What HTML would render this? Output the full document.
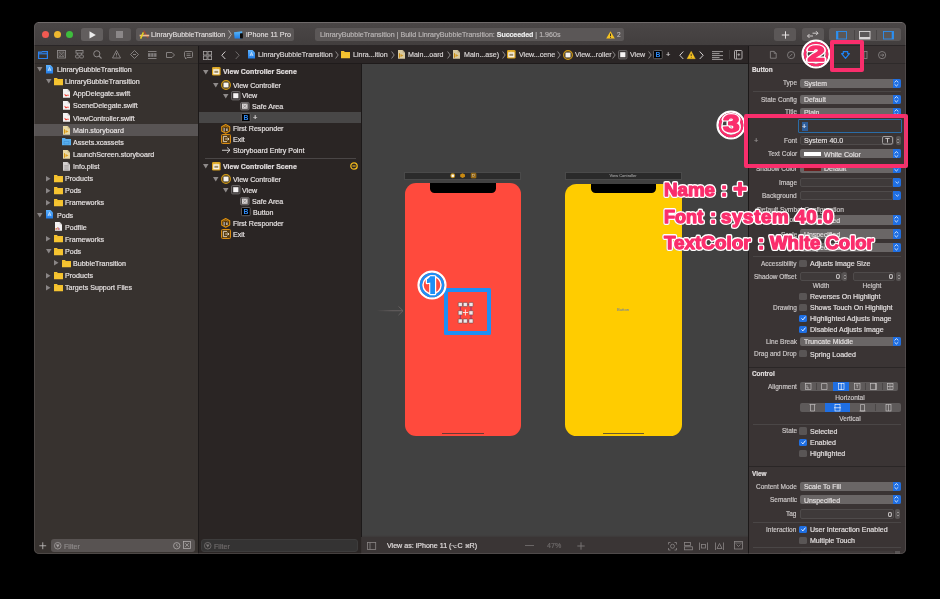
<!DOCTYPE html>
<html><head><meta charset="utf-8"><style>
html,body{margin:0;padding:0;background:#000;width:940px;height:599px;overflow:hidden;}
body>div,body>svg,#win div,#win svg{position:absolute;}
.t{white-space:nowrap;font-family:"Liberation Sans",sans-serif;-webkit-text-stroke:0.18px currentColor;will-change:transform;}
svg{overflow:visible;}
</style></head><body>
<div style="left:34px;top:22px;width:872px;height:532px;background:#373231;border-radius:5px;"></div>
<div style="left:34px;top:22px;width:872px;height:23px;background:linear-gradient(#4b4747,#423e3e);border-radius:5px 5px 0 0;"></div>
<div style="left:34px;top:45px;width:164px;height:509px;background:#37322f;border-radius:0 0 0 5px;"></div>
<div style="left:198px;top:45px;width:1px;height:509px;background:#1c1919;"></div>
<div style="left:199px;top:45px;width:549px;height:18px;background:#2b2626;"></div>
<div style="left:199px;top:63px;width:549px;height:1px;background:#1f1b1b;"></div>
<div style="left:199px;top:64px;width:162px;height:490px;background:#2a2524;"></div>
<div style="left:361px;top:64px;width:1px;height:473px;background:#1c1919;"></div>
<div style="left:362px;top:64px;width:386px;height:473px;background:#414141;"></div>
<div style="left:362px;top:537px;width:386px;height:17px;background:#3a3535;"></div>
<div style="left:748px;top:45px;width:1px;height:509px;background:#1c1919;"></div>
<div style="left:749px;top:45px;width:157px;height:509px;background:#3a3434;border-radius:0 0 5px 0;"></div>
<div style="left:34px;top:22px;width:872px;height:532px;background:transparent;box-sizing:border-box;border:0.6px solid rgba(120,115,115,0.35);border-radius:5px;z-index:1;"></div>
<div style="left:38px;top:22px;width:864px;height:0.8000000000000007px;background:#6a6666;"></div>
<div style="left:41.6px;top:30.6px;width:7.8px;height:7.8px;border-radius:50%;background:#f05a52"></div>
<div style="left:53.7px;top:30.6px;width:7.8px;height:7.8px;border-radius:50%;background:#efb82f"></div>
<div style="left:65.69999999999999px;top:30.6px;width:7.8px;height:7.8px;border-radius:50%;background:#3ebd3d"></div>
<div style="left:81.3px;top:28px;width:22.0px;height:13px;background:#625e5e;border-radius:2.5px;"></div>
<svg style="left:88.5px;top:30.8px;" width="7" height="8" viewBox="0 0 7 8"><path d="M0.5 0.3 L6.8 3.9 L0.5 7.5 Z" fill="#ececec"/></svg>
<div style="left:109px;top:28px;width:21.599999999999994px;height:13px;background:#5b5757;border-radius:2.5px;"></div>
<div style="left:116.3px;top:31.3px;width:7.0px;height:6.9999999999999964px;background:#8b8788;"></div>
<div style="left:135.8px;top:28px;width:158.2px;height:13.200000000000003px;background:#5b5757;border-radius:2.5px;"></div>
<svg style="left:139px;top:30px;" width="11" height="10" viewBox="0 0 11 10"><path d="M4.6 0.6 L9 8" stroke="#a84a30" stroke-width="1.3"/><rect x="0.6" y="4.7" width="9.6" height="1.7" fill="#f1bb90"/><path d="M1.6 8.6 L4.4 2.4" stroke="#e6cf22" stroke-width="1.5"/></svg>
<div class="t" style="left:151.3px;top:29.10px;height:12px;line-height:12px;font-size:7.1px;color:#dedada;font-weight:normal;letter-spacing:-0.02px;">LinraryBubbleTransition</div>
<svg style="left:228px;top:30px;" width="4" height="9" viewBox="0 0 4 9"><path d="M0.6 0.4 L3.3 4.4 L0.6 8.6" stroke="#c5c1c1" stroke-width="0.8" fill="none"/></svg>
<svg style="left:234px;top:30.8px;" width="9.5" height="8" viewBox="0 0 9.5 8"><defs><linearGradient id="ipg" x1="0" y1="0" x2="0" y2="1"><stop offset="0" stop-color="#5ab8f8"/><stop offset="1" stop-color="#1f7ee8"/></linearGradient></defs><path d="M0 1.3 L8.2 0.2 L8 7.4 L0.6 7.4 Z" fill="url(#ipg)"/><rect x="6" y="2.2" width="2.9" height="5.2" rx="0.6" fill="#0a0a0a"/></svg>
<div class="t" style="left:245.7px;top:29.10px;height:12px;line-height:12px;font-size:7.2px;color:#dedada;font-weight:normal;">iPhone 11 Pro</div>
<div style="left:315.3px;top:28px;width:309.2px;height:13px;background:#5b5757;border-radius:2.5px;"></div>
<div class="t" style="left:320px;top:29.10px;height:12px;line-height:12px;font-size:7.1px;color:#b9b5b5;font-weight:normal;">LinraryBubbleTransition | Build LinraryBubbleTransition: <b style="color:#ededed;letter-spacing:-0.1px">Succeeded</b> | 1.960s</div>
<svg style="left:606.3px;top:30.5px;" width="9" height="8" viewBox="0 0 9 8"><path d="M4.5 0.3 L8.8 7.6 L0.2 7.6 Z" fill="#f5c221"/><path d="M4.5 2.6 L4.5 5.2" stroke="#3b3020" stroke-width="1"/><circle cx="4.5" cy="6.4" r="0.5" fill="#3b3020"/></svg>
<div class="t" style="left:617px;top:29.10px;height:12px;line-height:12px;font-size:6.5px;color:#b9b5b5;font-weight:normal;">2</div>
<div style="left:774.3px;top:28.2px;width:21.600000000000023px;height:12.599999999999998px;background:#5b5757;border-radius:2.5px;"></div>
<svg style="left:780.5px;top:30.5px;" width="9" height="8" viewBox="0 0 9 8"><path d="M4.5 0.3 L4.5 7.7 M0.8 4 L8.2 4" stroke="#e4e0e0" stroke-width="1"/></svg>
<div style="left:801.6px;top:28.2px;width:22.0px;height:12.599999999999998px;background:#5b5757;border-radius:2.5px;"></div>
<svg style="left:805.5px;top:30px;" width="13" height="9" viewBox="0 0 13 9"><path d="M6.5 3.2 L12 3.2 M10 1.2 L12 3.2 L10 5.2" stroke="#d0cccc" stroke-width="1" fill="none"/><path d="M7 6 L1.5 6 M3.5 4 L1.5 6 L3.5 8" stroke="#d0cccc" stroke-width="1" fill="none"/></svg>
<div style="left:828.7px;top:28.2px;width:72.09999999999991px;height:12.599999999999998px;background:#5b5757;border-radius:2.5px;"></div>
<div style="left:853.5px;top:29.5px;width:0.6000000000000227px;height:10.0px;background:#4a4646;"></div>
<div style="left:876px;top:29.5px;width:0.6000000000000227px;height:10.0px;background:#4a4646;"></div>
<svg style="left:836px;top:30.5px;" width="11" height="8.5" viewBox="0 0 11 8.5"><rect x="0.5" y="0.5" width="10" height="7.5" stroke="#2d8ff0" stroke-width="0.9" fill="none"/><rect x="0.5" y="0.5" width="1.8" height="7.5" fill="#2d8ff0"/></svg>
<svg style="left:859.2px;top:30.5px;" width="11.5" height="8.5" viewBox="0 0 11.5 8.5"><rect x="0.5" y="0.5" width="10.5" height="7.5" stroke="#d8d4d4" stroke-width="0.9" fill="none"/><rect x="0.5" y="6" width="10.5" height="2" fill="#d8d4d4"/></svg>
<svg style="left:883px;top:30.5px;" width="11" height="8.5" viewBox="0 0 11 8.5"><rect x="0.5" y="0.5" width="10" height="7.5" stroke="#2d8ff0" stroke-width="0.9" fill="none"/><rect x="8.7" y="0.5" width="1.8" height="7.5" fill="#2d8ff0"/></svg>
<div style="left:34px;top:44.5px;width:872px;height:0.5px;background:#2a2627;"></div>
<svg style="left:38px;top:50.5px;" width="10" height="8" viewBox="0 0 10 8"><path d="M0.6 1.2 L3.6 1.2 L4.4 0.6 L9.4 0.6 L9.4 7.5 L0.6 7.5 Z" stroke="#2c84f2" stroke-width="1.2" fill="none"/><path d="M0.6 2.8 L9.4 2.8" stroke="#2c84f2" stroke-width="1.1"/></svg>
<svg style="left:57px;top:50.3px;" width="9" height="8.5" viewBox="0 0 9 8.5"><rect x="0.5" y="0.5" width="8" height="7.5" stroke="#8d8989" stroke-width="0.9" fill="none"/><path d="M2.5 2.3 L6.5 6.2 M6.5 2.3 L2.5 6.2" stroke="#8d8989" stroke-width="0.8"/><rect x="2" y="2" width="5" height="4.5" stroke="#8d8989" stroke-width="0.6" fill="none"/></svg>
<svg style="left:75px;top:50.3px;" width="9" height="8.5" viewBox="0 0 9 8.5"><rect x="1" y="0.5" width="7" height="2.6" stroke="#8d8989" stroke-width="0.9" fill="none"/><path d="M2.5 3 L2.5 5 M6.5 3 L6.5 5" stroke="#8d8989" stroke-width="0.8"/><rect x="0.6" y="5" width="3.6" height="3" rx="1" stroke="#8d8989" stroke-width="0.9" fill="none"/><rect x="4.8" y="5" width="3.6" height="3" rx="1" stroke="#8d8989" stroke-width="0.9" fill="none"/></svg>
<svg style="left:93px;top:50.3px;" width="9" height="9" viewBox="0 0 9 9"><circle cx="3.8" cy="3.8" r="3.1" stroke="#8d8989" stroke-width="1" fill="none"/><path d="M6 6 L8.5 8.5" stroke="#8d8989" stroke-width="1.1"/></svg>
<svg style="left:111.5px;top:50.3px;" width="9" height="8.5" viewBox="0 0 9 8.5"><path d="M4.5 0.5 L8.5 8 L0.5 8 Z" stroke="#8d8989" stroke-width="0.9" fill="none" stroke-linejoin="round"/><path d="M4.5 3 L4.5 5.5" stroke="#8d8989" stroke-width="0.9"/><circle cx="4.5" cy="6.7" r="0.45" fill="#8d8989"/></svg>
<svg style="left:129.6px;top:50.3px;" width="9" height="9" viewBox="0 0 9 9"><path d="M4.5 0.5 L8.5 4.5 L4.5 8.5 L0.5 4.5 Z" stroke="#8d8989" stroke-width="0.9" fill="none"/><path d="M3 4.5 L6 4.5" stroke="#8d8989" stroke-width="0.9"/></svg>
<svg style="left:147.8px;top:50.8px;" width="8.5" height="8" viewBox="0 0 8.5 8"><path d="M0 0.5 L8.5 0.5 M0 7.5 L8.5 7.5" stroke="#8d8989" stroke-width="0.9"/><rect x="0" y="2.2" width="8.5" height="3.6" fill="#8d8989" opacity="0.85"/><path d="M2.8 2.2 L2.8 5.8 M5.7 2.2 L5.7 5.8" stroke="#37322f" stroke-width="0.6"/></svg>
<svg style="left:166px;top:51.5px;" width="9" height="6" viewBox="0 0 9 6"><path d="M0.5 0.5 L6 0.5 L8.5 3 L6 5.5 L0.5 5.5 Z" stroke="#8d8989" stroke-width="0.9" fill="none"/></svg>
<svg style="left:184.2px;top:50.5px;" width="9" height="9" viewBox="0 0 9 9"><path d="M1.5 0.5 L7.5 0.5 Q8.5 0.5 8.5 1.5 L8.5 5.5 Q8.5 6.5 7.5 6.5 L3 6.5 L1.5 8 L1.5 6.5 Q0.5 6.5 0.5 5.5 L0.5 1.5 Q0.5 0.5 1.5 0.5 Z" stroke="#8d8989" stroke-width="0.9" fill="none"/><path d="M2.5 2.8 L6.5 2.8 M2.5 4.5 L6.5 4.5" stroke="#8d8989" stroke-width="0.8"/></svg>
<div style="left:34px;top:63px;width:164px;height:0.6000000000000014px;background:#2d2928;"></div>
<div style="left:34px;top:123.79999999999998px;width:164px;height:12.199999999999989px;background:#585454;"></div>
<svg style="left:37.25px;top:67.1px;" width="5.5" height="4.6" viewBox="0 0 5.5 4.6"><path d="M0 0 L5.5 0 L2.75 4.5 Z" fill="#8a8686"/></svg>
<svg style="left:46.1px;top:65.0px;" width="7" height="8.6" viewBox="0 0 7 8.6"><defs><linearGradient id="pg" x1="0" y1="0" x2="0" y2="1"><stop offset="0" stop-color="#5fb4ff"/><stop offset="1" stop-color="#1f7ae6"/></linearGradient></defs><path d="M0 0 L4.5 0 L7 2.5 L7 8.6 L0 8.6 Z" fill="url(#pg)"/><path d="M2 6 L3.5 2.5 L5 6 M2.5 5 L4.5 5" stroke="#fff" stroke-width="0.6" fill="none"/></svg>
<div class="t" style="left:56.6px;top:64.10px;height:12px;line-height:12px;font-size:7.1px;color:#e6e2e2;font-weight:normal;">LinraryBubbleTransition</div>
<svg style="left:45.55px;top:79.22px;" width="5.5" height="4.6" viewBox="0 0 5.5 4.6"><path d="M0 0 L5.5 0 L2.75 4.5 Z" fill="#8a8686"/></svg>
<svg style="left:53.9px;top:77.82000000000001px;" width="9" height="7.2" viewBox="0 0 9 7.2"><path d="M0 0.3 Q0 0 0.3 0 L3 0 L3.8 1 L9 1 L9 7.2 L0 7.2 Z" fill="#f6c431"/><path d="M0 1.8 L9 1.8" stroke="#e9b422" stroke-width="0.4"/></svg>
<div class="t" style="left:65.1px;top:76.22px;height:12px;line-height:12px;font-size:7.1px;color:#e6e2e2;font-weight:normal;">LinraryBubbleTransition</div>
<svg style="left:63.0px;top:89.13999999999999px;" width="7" height="8.8" viewBox="0 0 7 8.8"><path d="M0 0 L4.6 0 L7 2.4 L7 8.8 L0 8.8 Z" fill="#f4f2f2"/><path d="M4.6 0 L4.6 2.4 L7 2.4" fill="#cfcaca"/><path d="M1.2 4.8 Q3 6.5 5.2 5.6 Q5.8 6.4 5.8 7.2 Q4.8 5.8 3 7.4 Q1.8 7 1.2 4.8 Z" fill="#f0382c"/></svg>
<div class="t" style="left:73.3px;top:88.34px;height:12px;line-height:12px;font-size:7.1px;color:#e6e2e2;font-weight:normal;">AppDelegate.swift</div>
<svg style="left:63.0px;top:101.25999999999999px;" width="7" height="8.8" viewBox="0 0 7 8.8"><path d="M0 0 L4.6 0 L7 2.4 L7 8.8 L0 8.8 Z" fill="#f4f2f2"/><path d="M4.6 0 L4.6 2.4 L7 2.4" fill="#cfcaca"/><path d="M1.2 4.8 Q3 6.5 5.2 5.6 Q5.8 6.4 5.8 7.2 Q4.8 5.8 3 7.4 Q1.8 7 1.2 4.8 Z" fill="#f0382c"/></svg>
<div class="t" style="left:73.3px;top:100.46px;height:12px;line-height:12px;font-size:7.1px;color:#e6e2e2;font-weight:normal;">SceneDelegate.swift</div>
<svg style="left:63.0px;top:113.38px;" width="7" height="8.8" viewBox="0 0 7 8.8"><path d="M0 0 L4.6 0 L7 2.4 L7 8.8 L0 8.8 Z" fill="#f4f2f2"/><path d="M4.6 0 L4.6 2.4 L7 2.4" fill="#cfcaca"/><path d="M1.2 4.8 Q3 6.5 5.2 5.6 Q5.8 6.4 5.8 7.2 Q4.8 5.8 3 7.4 Q1.8 7 1.2 4.8 Z" fill="#f0382c"/></svg>
<div class="t" style="left:73.3px;top:112.58px;height:12px;line-height:12px;font-size:7.1px;color:#e6e2e2;font-weight:normal;">ViewController.swift</div>
<svg style="left:63.0px;top:125.49999999999997px;" width="7" height="8.8" viewBox="0 0 7 8.8"><path d="M0 0 L4.6 0 L7 2.4 L7 8.8 L0 8.8 Z" fill="#e8d9a6"/><path d="M4.6 0 L4.6 2.4 L7 2.4" fill="#c7b57a"/><rect x="1" y="3.2" width="1" height="4.5" fill="#d69a15"/><path d="M2.5 4 L5.5 5.5 L2.5 7 Z" fill="#e0a020"/></svg>
<div class="t" style="left:73.3px;top:124.70px;height:12px;line-height:12px;font-size:7.1px;color:#e6e2e2;font-weight:normal;">Main.storyboard</div>
<svg style="left:61.5px;top:138.42px;" width="9" height="7.2" viewBox="0 0 9 7.2"><path d="M0 0.3 Q0 0 0.3 0 L3 0 L3.8 1 L9 1 L9 7.2 L0 7.2 Z" fill="#5ab0f0"/><path d="M2 3.5 L7 3.5 L7 6 L2 6 Z" stroke="#2a7fc8" stroke-width="0.4" fill="none"/></svg>
<div class="t" style="left:73.3px;top:136.82px;height:12px;line-height:12px;font-size:7.1px;color:#e6e2e2;font-weight:normal;">Assets.xcassets</div>
<svg style="left:63.0px;top:149.73999999999998px;" width="7" height="8.8" viewBox="0 0 7 8.8"><path d="M0 0 L4.6 0 L7 2.4 L7 8.8 L0 8.8 Z" fill="#e8d9a6"/><path d="M4.6 0 L4.6 2.4 L7 2.4" fill="#c7b57a"/><rect x="1" y="3.2" width="1" height="4.5" fill="#d69a15"/><path d="M2.5 4 L5.5 5.5 L2.5 7 Z" fill="#e0a020"/></svg>
<div class="t" style="left:73.3px;top:148.94px;height:12px;line-height:12px;font-size:7.1px;color:#e6e2e2;font-weight:normal;">LaunchScreen.storyboard</div>
<svg style="left:63.0px;top:161.85999999999999px;" width="7" height="8.8" viewBox="0 0 7 8.8"><path d="M0 0 L4.6 0 L7 2.4 L7 8.8 L0 8.8 Z" fill="#d4d0d0"/><path d="M4.6 0 L4.6 2.4 L7 2.4" fill="#a9a5a5"/><path d="M1.3 3.5 L5.7 3.5 M1.3 4.8 L5.7 4.8 M1.3 6.1 L5.7 6.1 M1.3 7.4 L5.7 7.4" stroke="#8a8686" stroke-width="0.5"/></svg>
<div class="t" style="left:73.3px;top:161.06px;height:12px;line-height:12px;font-size:7.1px;color:#e6e2e2;font-weight:normal;">Info.plist</div>
<svg style="left:46.099999999999994px;top:175.63px;" width="4.6" height="5.5" viewBox="0 0 4.6 5.5"><path d="M0 0 L4.5 2.75 L0 5.5 Z" fill="#8a8686"/></svg>
<svg style="left:53.9px;top:174.78px;" width="9" height="7.2" viewBox="0 0 9 7.2"><path d="M0 0.3 Q0 0 0.3 0 L3 0 L3.8 1 L9 1 L9 7.2 L0 7.2 Z" fill="#f6c431"/><path d="M0 1.8 L9 1.8" stroke="#e9b422" stroke-width="0.4"/></svg>
<div class="t" style="left:65.1px;top:173.18px;height:12px;line-height:12px;font-size:7.1px;color:#e6e2e2;font-weight:normal;">Products</div>
<svg style="left:46.099999999999994px;top:187.75px;" width="4.6" height="5.5" viewBox="0 0 4.6 5.5"><path d="M0 0 L4.5 2.75 L0 5.5 Z" fill="#8a8686"/></svg>
<svg style="left:53.9px;top:186.9px;" width="9" height="7.2" viewBox="0 0 9 7.2"><path d="M0 0.3 Q0 0 0.3 0 L3 0 L3.8 1 L9 1 L9 7.2 L0 7.2 Z" fill="#f6c431"/><path d="M0 1.8 L9 1.8" stroke="#e9b422" stroke-width="0.4"/></svg>
<div class="t" style="left:65.1px;top:185.30px;height:12px;line-height:12px;font-size:7.1px;color:#e6e2e2;font-weight:normal;">Pods</div>
<svg style="left:46.099999999999994px;top:199.87px;" width="4.6" height="5.5" viewBox="0 0 4.6 5.5"><path d="M0 0 L4.5 2.75 L0 5.5 Z" fill="#8a8686"/></svg>
<svg style="left:53.9px;top:199.02px;" width="9" height="7.2" viewBox="0 0 9 7.2"><path d="M0 0.3 Q0 0 0.3 0 L3 0 L3.8 1 L9 1 L9 7.2 L0 7.2 Z" fill="#f6c431"/><path d="M0 1.8 L9 1.8" stroke="#e9b422" stroke-width="0.4"/></svg>
<div class="t" style="left:65.1px;top:197.42px;height:12px;line-height:12px;font-size:7.1px;color:#e6e2e2;font-weight:normal;">Frameworks</div>
<svg style="left:37.25px;top:212.54000000000002px;" width="5.5" height="4.6" viewBox="0 0 5.5 4.6"><path d="M0 0 L5.5 0 L2.75 4.5 Z" fill="#8a8686"/></svg>
<svg style="left:46.1px;top:210.44px;" width="7" height="8.6" viewBox="0 0 7 8.6"><defs><linearGradient id="pg" x1="0" y1="0" x2="0" y2="1"><stop offset="0" stop-color="#5fb4ff"/><stop offset="1" stop-color="#1f7ae6"/></linearGradient></defs><path d="M0 0 L4.5 0 L7 2.5 L7 8.6 L0 8.6 Z" fill="url(#pg)"/><path d="M2 6 L3.5 2.5 L5 6 M2.5 5 L4.5 5" stroke="#fff" stroke-width="0.6" fill="none"/></svg>
<div class="t" style="left:56.6px;top:209.54px;height:12px;line-height:12px;font-size:7.1px;color:#e6e2e2;font-weight:normal;">Pods</div>
<svg style="left:55px;top:222.46px;" width="7" height="8.8" viewBox="0 0 7 8.8"><path d="M0 0 L4.6 0 L7 2.4 L7 8.8 L0 8.8 Z" fill="#f4f2f2"/><path d="M4.6 0 L4.6 2.4 L7 2.4" fill="#cfcaca"/><text x="0.6" y="7.6" font-size="4.2" font-family="Liberation Serif" fill="#c0392b" font-weight="bold">rb</text></svg>
<div class="t" style="left:65px;top:221.66px;height:12px;line-height:12px;font-size:7.1px;color:#e6e2e2;font-weight:normal;">Podfile</div>
<svg style="left:46.099999999999994px;top:236.22999999999996px;" width="4.6" height="5.5" viewBox="0 0 4.6 5.5"><path d="M0 0 L4.5 2.75 L0 5.5 Z" fill="#8a8686"/></svg>
<svg style="left:53.9px;top:235.37999999999997px;" width="9" height="7.2" viewBox="0 0 9 7.2"><path d="M0 0.3 Q0 0 0.3 0 L3 0 L3.8 1 L9 1 L9 7.2 L0 7.2 Z" fill="#f6c431"/><path d="M0 1.8 L9 1.8" stroke="#e9b422" stroke-width="0.4"/></svg>
<div class="t" style="left:65.1px;top:233.78px;height:12px;line-height:12px;font-size:7.1px;color:#e6e2e2;font-weight:normal;">Frameworks</div>
<svg style="left:45.55px;top:248.89999999999998px;" width="5.5" height="4.6" viewBox="0 0 5.5 4.6"><path d="M0 0 L5.5 0 L2.75 4.5 Z" fill="#8a8686"/></svg>
<svg style="left:53.9px;top:247.49999999999997px;" width="9" height="7.2" viewBox="0 0 9 7.2"><path d="M0 0.3 Q0 0 0.3 0 L3 0 L3.8 1 L9 1 L9 7.2 L0 7.2 Z" fill="#f6c431"/><path d="M0 1.8 L9 1.8" stroke="#e9b422" stroke-width="0.4"/></svg>
<div class="t" style="left:65.1px;top:245.90px;height:12px;line-height:12px;font-size:7.1px;color:#e6e2e2;font-weight:normal;">Pods</div>
<svg style="left:54.4px;top:260.46999999999997px;" width="4.6" height="5.5" viewBox="0 0 4.6 5.5"><path d="M0 0 L4.5 2.75 L0 5.5 Z" fill="#8a8686"/></svg>
<svg style="left:62.2px;top:259.61999999999995px;" width="9" height="7.2" viewBox="0 0 9 7.2"><path d="M0 0.3 Q0 0 0.3 0 L3 0 L3.8 1 L9 1 L9 7.2 L0 7.2 Z" fill="#f6c431"/><path d="M0 1.8 L9 1.8" stroke="#e9b422" stroke-width="0.4"/></svg>
<div class="t" style="left:73.4px;top:258.02px;height:12px;line-height:12px;font-size:7.1px;color:#e6e2e2;font-weight:normal;">BubbleTransition</div>
<svg style="left:46.099999999999994px;top:272.59px;" width="4.6" height="5.5" viewBox="0 0 4.6 5.5"><path d="M0 0 L4.5 2.75 L0 5.5 Z" fill="#8a8686"/></svg>
<svg style="left:53.9px;top:271.73999999999995px;" width="9" height="7.2" viewBox="0 0 9 7.2"><path d="M0 0.3 Q0 0 0.3 0 L3 0 L3.8 1 L9 1 L9 7.2 L0 7.2 Z" fill="#f6c431"/><path d="M0 1.8 L9 1.8" stroke="#e9b422" stroke-width="0.4"/></svg>
<div class="t" style="left:65.1px;top:270.14px;height:12px;line-height:12px;font-size:7.1px;color:#e6e2e2;font-weight:normal;">Products</div>
<svg style="left:46.099999999999994px;top:284.71px;" width="4.6" height="5.5" viewBox="0 0 4.6 5.5"><path d="M0 0 L4.5 2.75 L0 5.5 Z" fill="#8a8686"/></svg>
<svg style="left:53.9px;top:283.85999999999996px;" width="9" height="7.2" viewBox="0 0 9 7.2"><path d="M0 0.3 Q0 0 0.3 0 L3 0 L3.8 1 L9 1 L9 7.2 L0 7.2 Z" fill="#f6c431"/><path d="M0 1.8 L9 1.8" stroke="#e9b422" stroke-width="0.4"/></svg>
<div class="t" style="left:65.1px;top:282.26px;height:12px;line-height:12px;font-size:7.1px;color:#e6e2e2;font-weight:normal;">Targets Support Files</div>
<svg style="left:38.8px;top:541.6px;" width="7.5" height="7.5" viewBox="0 0 7.5 7.5"><path d="M3.75 0.3 L3.75 7.2 M0.3 3.75 L7.2 3.75" stroke="#c5c1c1" stroke-width="0.8"/></svg>
<div style="left:51px;top:539.4px;width:144.1px;height:12.800000000000068px;background:#585352;border-radius:3px;"></div>
<svg style="left:53.8px;top:541.8px;" width="7.5" height="7.5" viewBox="0 0 7.5 7.5"><circle cx="3.75" cy="3.75" r="3.3" stroke="#a7a3a3" stroke-width="0.75" fill="none"/><path d="M1.9 2.6 L5.6 2.6 L3.75 5.4 Z" fill="#a7a3a3"/></svg>
<div class="t" style="left:63.5px;top:540.60px;height:12px;line-height:12px;font-size:7.1px;color:#8f8b8b;font-weight:normal;">Filter</div>
<svg style="left:172.5px;top:541.5px;" width="7.5" height="7.5" viewBox="0 0 7.5 7.5"><circle cx="3.75" cy="3.75" r="3.2" stroke="#aeaaaa" stroke-width="0.8" fill="none"/><path d="M3.75 1.8 L3.75 3.9 L5.2 4.8" stroke="#aeaaaa" stroke-width="0.7" fill="none"/></svg>
<svg style="left:182.5px;top:541.3px;" width="8" height="8" viewBox="0 0 8 8"><rect x="0.5" y="0.5" width="7" height="7" stroke="#aeaaaa" stroke-width="0.8" fill="none"/><path d="M2.2 2.2 L5.8 5.8 M5.8 2.2 L2.2 5.8" stroke="#aeaaaa" stroke-width="0.7"/></svg>
<svg style="left:202.5px;top:50.5px;" width="9" height="9" viewBox="0 0 9 9"><rect x="0.4" y="0.4" width="3.6" height="3.6" stroke="#a9a5a5" stroke-width="0.8" fill="none"/><rect x="5" y="0.4" width="3.6" height="3.6" stroke="#a9a5a5" stroke-width="0.8" fill="none"/><rect x="0.4" y="5" width="3.6" height="3.6" stroke="#a9a5a5" stroke-width="0.8" fill="none"/><rect x="5" y="5" width="3.6" height="3.6" stroke="#a9a5a5" stroke-width="0.8" fill="none"/></svg>
<svg style="left:220.5px;top:50.5px;" width="5" height="8.5" viewBox="0 0 5 8.5"><path d="M4.3 0.5 L0.8 4.25 L4.3 8" stroke="#d5d1d1" stroke-width="1" fill="none"/></svg>
<svg style="left:234.5px;top:50.5px;" width="5" height="8.5" viewBox="0 0 5 8.5"><path d="M0.7 0.5 L4.2 4.25 L0.7 8" stroke="#6f6b6b" stroke-width="1" fill="none"/></svg>
<svg style="left:247.8px;top:50.2px;" width="7" height="8.6" viewBox="0 0 7 8.6"><defs><linearGradient id="pg" x1="0" y1="0" x2="0" y2="1"><stop offset="0" stop-color="#5fb4ff"/><stop offset="1" stop-color="#1f7ae6"/></linearGradient></defs><path d="M0 0 L4.5 0 L7 2.5 L7 8.6 L0 8.6 Z" fill="url(#pg)"/><path d="M2 6 L3.5 2.5 L5 6 M2.5 5 L4.5 5" stroke="#fff" stroke-width="0.6" fill="none"/></svg>
<div class="t" style="left:258.4px;top:49.00px;height:12px;line-height:12px;font-size:7.1px;color:#d9d5d5;font-weight:normal;">LinraryBubbleTransition</div>
<svg style="left:335.3px;top:50.8px;" width="4" height="8" viewBox="0 0 4 8"><path d="M0.6 0.5 L3.2 4 L0.6 7.5" stroke="#a5a1a1" stroke-width="0.8" fill="none"/></svg>
<svg style="left:341.3px;top:50.9px;" width="9" height="7.2" viewBox="0 0 9 7.2"><path d="M0 0.3 Q0 0 0.3 0 L3 0 L3.8 1 L9 1 L9 7.2 L0 7.2 Z" fill="#f6c431"/><path d="M0 1.8 L9 1.8" stroke="#e9b422" stroke-width="0.4"/></svg>
<div class="t" style="left:352.7px;top:49.00px;height:12px;line-height:12px;font-size:7.1px;color:#d9d5d5;font-weight:normal;">Linra...ition</div>
<svg style="left:390.6px;top:50.8px;" width="4" height="8" viewBox="0 0 4 8"><path d="M0.6 0.5 L3.2 4 L0.6 7.5" stroke="#a5a1a1" stroke-width="0.8" fill="none"/></svg>
<svg style="left:397.6px;top:50px;" width="7" height="8.8" viewBox="0 0 7 8.8"><path d="M0 0 L4.6 0 L7 2.4 L7 8.8 L0 8.8 Z" fill="#d8c9a0"/><path d="M4.6 0 L4.6 2.4 L7 2.4" fill="#b7a57a"/><rect x="1" y="3.2" width="1" height="4.5" fill="#c98a10"/><path d="M2.5 4 L5.5 5.5 L2.5 7 Z" fill="#d39a20"/></svg>
<div class="t" style="left:408.4px;top:49.00px;height:12px;line-height:12px;font-size:7.1px;color:#d9d5d5;font-weight:normal;">Main...oard</div>
<svg style="left:446.5px;top:50.8px;" width="4" height="8" viewBox="0 0 4 8"><path d="M0.6 0.5 L3.2 4 L0.6 7.5" stroke="#a5a1a1" stroke-width="0.8" fill="none"/></svg>
<svg style="left:453px;top:50px;" width="7" height="8.8" viewBox="0 0 7 8.8"><path d="M0 0 L4.6 0 L7 2.4 L7 8.8 L0 8.8 Z" fill="#d8c9a0"/><path d="M4.6 0 L4.6 2.4 L7 2.4" fill="#b7a57a"/><rect x="1" y="3.2" width="1" height="4.5" fill="#c98a10"/><path d="M2.5 4 L5.5 5.5 L2.5 7 Z" fill="#d39a20"/></svg>
<div class="t" style="left:464px;top:49.00px;height:12px;line-height:12px;font-size:7.1px;color:#d9d5d5;font-weight:normal;">Main...ase)</div>
<svg style="left:501.5px;top:50.8px;" width="4" height="8" viewBox="0 0 4 8"><path d="M0.6 0.5 L3.2 4 L0.6 7.5" stroke="#a5a1a1" stroke-width="0.8" fill="none"/></svg>
<svg style="left:507.4px;top:50.2px;" width="8.6" height="8.6" viewBox="0 0 8.6 8.6"><rect x="0" y="0" width="8.6" height="8.6" rx="1.3" fill="#d9a11b"/><rect x="1.2" y="2.2" width="6.2" height="5.2" fill="#f6efe0"/><rect x="2.4" y="3.8" width="3.8" height="2" fill="#9a8a65"/><path d="M1.5 1.2 L7 1.2" stroke="#f8e8a0" stroke-width="0.6" stroke-dasharray="0.8 0.6"/></svg>
<div class="t" style="left:519px;top:49.00px;height:12px;line-height:12px;font-size:7.1px;color:#d9d5d5;font-weight:normal;">View...cene</div>
<svg style="left:557.3px;top:50.8px;" width="4" height="8" viewBox="0 0 4 8"><path d="M0.6 0.5 L3.2 4 L0.6 7.5" stroke="#a5a1a1" stroke-width="0.8" fill="none"/></svg>
<svg style="left:562.5px;top:49.5px;" width="10" height="10" viewBox="0 0 10 10"><circle cx="5" cy="5" r="4.4" stroke="#d29b15" stroke-width="1.1" fill="#4a3d25"/><rect x="2.5" y="2.6" width="5" height="4.8" fill="#f6f4f0"/></svg>
<div class="t" style="left:574.7px;top:49.00px;height:12px;line-height:12px;font-size:7.1px;color:#d9d5d5;font-weight:normal;">View...roller</div>
<svg style="left:612px;top:50.8px;" width="4" height="8" viewBox="0 0 4 8"><path d="M0.6 0.5 L3.2 4 L0.6 7.5" stroke="#a5a1a1" stroke-width="0.8" fill="none"/></svg>
<svg style="left:617.8px;top:49.8px;" width="9.5" height="9.4" viewBox="0 0 9.5 9.4"><rect x="0.5" y="0.5" width="8.5" height="8.4" rx="1.2" stroke="#6c6868" stroke-width="1" fill="#3a3636"/><rect x="2.2" y="2.2" width="5.2" height="5" fill="#f6f4f4"/></svg>
<div class="t" style="left:630px;top:49.00px;height:12px;line-height:12px;font-size:7.1px;color:#d9d5d5;font-weight:normal;">View</div>
<svg style="left:647.5px;top:50.8px;" width="4" height="8" viewBox="0 0 4 8"><path d="M0.6 0.5 L3.2 4 L0.6 7.5" stroke="#a5a1a1" stroke-width="0.8" fill="none"/></svg>
<svg style="left:653px;top:49.9px;" width="9.7" height="9.2" viewBox="0 0 9.7 9.2"><rect x="0.5" y="0.5" width="8.7" height="8.2" rx="1" stroke="#6c6868" stroke-width="0.9" fill="#000"/><text x="4.85" y="7.1" text-anchor="middle" font-size="6.8" font-weight="bold" font-family="Liberation Sans" fill="#2f8af5">B</text></svg>
<div class="t" style="left:665.5px;top:49.00px;height:12px;line-height:12px;font-size:7.5px;color:#d9d5d5;font-weight:normal;">+</div>
<svg style="left:679.3px;top:50.5px;" width="5" height="8.5" viewBox="0 0 5 8.5"><path d="M4.3 0.5 L0.8 4.25 L4.3 8" stroke="#d5d1d1" stroke-width="1" fill="none"/></svg>
<svg style="left:687.4px;top:50.5px;" width="8.4" height="8" viewBox="0 0 8.4 8"><path d="M4.2 0.3 L8.3 7.7 L0.1 7.7 Z" fill="#f5c221" stroke="#f5c221" stroke-width="0.4" stroke-linejoin="round"/><path d="M4.2 2.8 L4.2 5.2" stroke="#3b3020" stroke-width="0.9"/><circle cx="4.2" cy="6.5" r="0.45" fill="#3b3020"/></svg>
<svg style="left:699px;top:50.5px;" width="5" height="8.5" viewBox="0 0 5 8.5"><path d="M0.7 0.5 L4.2 4.25 L0.7 8" stroke="#d5d1d1" stroke-width="1" fill="none"/></svg>
<svg style="left:712px;top:50.5px;" width="11.5" height="9" viewBox="0 0 11.5 9"><path d="M0 0.6 L11 0.6 M0 2.6 L7.5 2.6 M0 4.6 L11 4.6 M0 6.6 L7.5 6.6 M0 8.4 L11 8.4" stroke="#bdb9b9" stroke-width="0.8"/></svg>
<div style="left:728.6px;top:50px;width:0.6000000000000227px;height:9px;background:#3e3a3a;"></div>
<svg style="left:734px;top:50px;" width="8.5" height="9.5" viewBox="0 0 8.5 9.5"><rect x="0.5" y="0.5" width="7.5" height="8.5" rx="0.8" stroke="#bdb9b9" stroke-width="0.9" fill="none"/><path d="M2.5 0.5 L2.5 9 M4.8 3.2 L4.8 6.2 M3.4 4.7 L6.2 4.7" stroke="#bdb9b9" stroke-width="0.8"/></svg>
<div style="left:199px;top:112.3px;width:162px;height:10.400000000000006px;background:#484747;"></div>
<svg style="left:203.15px;top:69.5px;" width="5.5" height="4.6" viewBox="0 0 5.5 4.6"><path d="M0 0 L5.5 0 L2.75 4.5 Z" fill="#8e8a8a"/></svg>
<svg style="left:211.8px;top:67.10000000000001px;" width="8.6" height="8.6" viewBox="0 0 8.6 8.6"><rect x="0" y="0" width="8.6" height="8.6" rx="1.3" fill="#d9a11b"/><rect x="1.2" y="2.2" width="6.2" height="5.2" fill="#f6efe0"/><rect x="2.4" y="3.8" width="3.8" height="2" fill="#9a8a65"/><path d="M1.5 1.2 L7 1.2" stroke="#f8e8a0" stroke-width="0.6" stroke-dasharray="0.8 0.6"/></svg>
<div class="t" style="left:223px;top:66.20px;height:12px;line-height:12px;font-size:7px;color:#e2dede;font-weight:bold;">View Controller Scene</div>
<svg style="left:212.85px;top:82.89999999999999px;" width="5.5" height="4.6" viewBox="0 0 5.5 4.6"><path d="M0 0 L5.5 0 L2.75 4.5 Z" fill="#8e8a8a"/></svg>
<svg style="left:221px;top:79.8px;" width="10" height="10" viewBox="0 0 10 10"><circle cx="5" cy="5" r="4.4" stroke="#d29b15" stroke-width="1.1" fill="#4a3d25"/><rect x="2.5" y="2.6" width="5" height="4.8" fill="#f6f4f0"/></svg>
<div class="t" style="left:232.6px;top:79.60px;height:12px;line-height:12px;font-size:7.1px;color:#e6e2e2;font-weight:normal;">View Controller</div>
<svg style="left:222.65px;top:93.69999999999999px;" width="5.5" height="4.6" viewBox="0 0 5.5 4.6"><path d="M0 0 L5.5 0 L2.75 4.5 Z" fill="#8e8a8a"/></svg>
<svg style="left:231px;top:90.89999999999999px;" width="9.5" height="9.4" viewBox="0 0 9.5 9.4"><rect x="0.5" y="0.5" width="8.5" height="8.4" rx="1.2" stroke="#6c6868" stroke-width="1" fill="#3a3636"/><rect x="2.2" y="2.2" width="5.2" height="5" fill="#f6f4f4"/></svg>
<div class="t" style="left:242.4px;top:90.40px;height:12px;line-height:12px;font-size:7.1px;color:#e6e2e2;font-weight:normal;">View</div>
<svg style="left:240.2px;top:101.7px;" width="9.6" height="8.4" viewBox="0 0 9.6 8.4"><rect x="0.5" y="0.5" width="8.6" height="7.4" rx="1.2" stroke="#6f6b6b" stroke-width="1" fill="#4a4646"/><rect x="2" y="1.6" width="5.6" height="5.2" fill="#d8d4d4"/><path d="M3 2.6 L6.6 5.8 M6.6 2.6 L3 5.8" stroke="#7a7676" stroke-width="0.6"/></svg>
<div class="t" style="left:252px;top:100.70px;height:12px;line-height:12px;font-size:7.1px;color:#e6e2e2;font-weight:normal;">Safe Area</div>
<svg style="left:240.6px;top:112.9px;" width="9.7" height="9.2" viewBox="0 0 9.7 9.2"><rect x="0.5" y="0.5" width="8.7" height="8.2" rx="1" stroke="#6c6868" stroke-width="0.9" fill="#000"/><text x="4.85" y="7.1" text-anchor="middle" font-size="6.8" font-weight="bold" font-family="Liberation Sans" fill="#2f8af5">B</text></svg>
<div class="t" style="left:252.7px;top:112.30px;height:12px;line-height:12px;font-size:7.5px;color:#e6e2e2;font-weight:normal;">+</div>
<svg style="left:221.2px;top:123.5px;" width="9.4" height="9.8" viewBox="0 0 9.4 9.8"><path d="M4.7 0.6 L8.7 2.8 L8.7 7 L4.7 9.2 L0.7 7 L0.7 2.8 Z" fill="#4d3412" stroke="#e0920f" stroke-width="1.1" stroke-linejoin="round"/><path d="M2.2 3.4 L4.7 2.2 L7.2 3.4" stroke="#e0920f" stroke-width="0.7" fill="none"/><rect x="2.4" y="4" width="1.6" height="3.6" fill="#9a9590"/><rect x="5.2" y="4.4" width="1.4" height="2.6" fill="#cfc9c0"/></svg>
<div class="t" style="left:232.6px;top:123.20px;height:12px;line-height:12px;font-size:7.1px;color:#e6e2e2;font-weight:normal;">First Responder</div>
<svg style="left:221px;top:134.2px;" width="10" height="10" viewBox="0 0 10 10"><rect x="0.5" y="0.5" width="9" height="9" rx="1" fill="#5a3e12" stroke="#d98c12" stroke-width="1"/><path d="M6 2.4 L2.4 2.4 L2.4 7.6 L6 7.6" stroke="#f0e6d6" stroke-width="0.8" fill="none"/><path d="M4.2 5 L8 5 M6.6 3.7 L8 5 L6.6 6.3" stroke="#f0e6d6" stroke-width="0.8" fill="none"/></svg>
<div class="t" style="left:232.6px;top:134.00px;height:12px;line-height:12px;font-size:7.1px;color:#e6e2e2;font-weight:normal;">Exit</div>
<svg style="left:221.8px;top:146.8px;" width="8.5" height="6.5" viewBox="0 0 8.5 6.5"><path d="M0 3.25 L8 3.25 M5 0.4 L8 3.25 L5 6.1" stroke="#e0dcdc" stroke-width="0.9" fill="none"/></svg>
<div class="t" style="left:232.6px;top:144.80px;height:12px;line-height:12px;font-size:7.1px;color:#e6e2e2;font-weight:normal;">Storyboard Entry Point</div>
<div style="left:205px;top:158.2px;width:150.60000000000002px;height:0.6000000000000227px;background:#4a4646;"></div>
<svg style="left:203.15px;top:164.00000000000003px;" width="5.5" height="4.6" viewBox="0 0 5.5 4.6"><path d="M0 0 L5.5 0 L2.75 4.5 Z" fill="#8e8a8a"/></svg>
<svg style="left:211.8px;top:161.6px;" width="8.6" height="8.6" viewBox="0 0 8.6 8.6"><rect x="0" y="0" width="8.6" height="8.6" rx="1.3" fill="#d9a11b"/><rect x="1.2" y="2.2" width="6.2" height="5.2" fill="#f6efe0"/><rect x="2.4" y="3.8" width="3.8" height="2" fill="#9a8a65"/><path d="M1.5 1.2 L7 1.2" stroke="#f8e8a0" stroke-width="0.6" stroke-dasharray="0.8 0.6"/></svg>
<div class="t" style="left:223px;top:160.70px;height:12px;line-height:12px;font-size:7px;color:#e2dede;font-weight:bold;">View Controller Scene</div>
<svg style="left:349.6px;top:162px;" width="8" height="8" viewBox="0 0 8 8"><circle cx="4" cy="4" r="3.2" stroke="#f0b81c" stroke-width="1.3" fill="none"/><path d="M2.4 4 L5.6 4" stroke="#f0b81c" stroke-width="1.1"/></svg>
<svg style="left:212.85px;top:177.40000000000003px;" width="5.5" height="4.6" viewBox="0 0 5.5 4.6"><path d="M0 0 L5.5 0 L2.75 4.5 Z" fill="#8e8a8a"/></svg>
<svg style="left:221px;top:174.3px;" width="10" height="10" viewBox="0 0 10 10"><circle cx="5" cy="5" r="4.4" stroke="#d29b15" stroke-width="1.1" fill="#4a3d25"/><rect x="2.5" y="2.6" width="5" height="4.8" fill="#f6f4f0"/></svg>
<div class="t" style="left:232.6px;top:174.10px;height:12px;line-height:12px;font-size:7.1px;color:#e6e2e2;font-weight:normal;">View Controller</div>
<svg style="left:222.65px;top:188.20000000000002px;" width="5.5" height="4.6" viewBox="0 0 5.5 4.6"><path d="M0 0 L5.5 0 L2.75 4.5 Z" fill="#8e8a8a"/></svg>
<svg style="left:231px;top:185.4px;" width="9.5" height="9.4" viewBox="0 0 9.5 9.4"><rect x="0.5" y="0.5" width="8.5" height="8.4" rx="1.2" stroke="#6c6868" stroke-width="1" fill="#3a3636"/><rect x="2.2" y="2.2" width="5.2" height="5" fill="#f6f4f4"/></svg>
<div class="t" style="left:242.4px;top:184.90px;height:12px;line-height:12px;font-size:7.1px;color:#e6e2e2;font-weight:normal;">View</div>
<svg style="left:240.2px;top:197.0px;" width="9.6" height="8.4" viewBox="0 0 9.6 8.4"><rect x="0.5" y="0.5" width="8.6" height="7.4" rx="1.2" stroke="#6f6b6b" stroke-width="1" fill="#4a4646"/><rect x="2" y="1.6" width="5.6" height="5.2" fill="#d8d4d4"/><path d="M3 2.6 L6.6 5.8 M6.6 2.6 L3 5.8" stroke="#7a7676" stroke-width="0.6"/></svg>
<div class="t" style="left:252px;top:196.00px;height:12px;line-height:12px;font-size:7.1px;color:#e6e2e2;font-weight:normal;">Safe Area</div>
<svg style="left:240.6px;top:207.4px;" width="9.7" height="9.2" viewBox="0 0 9.7 9.2"><rect x="0.5" y="0.5" width="8.7" height="8.2" rx="1" stroke="#6c6868" stroke-width="0.9" fill="#000"/><text x="4.85" y="7.1" text-anchor="middle" font-size="6.8" font-weight="bold" font-family="Liberation Sans" fill="#2f8af5">B</text></svg>
<div class="t" style="left:252.7px;top:206.80px;height:12px;line-height:12px;font-size:7.1px;color:#e6e2e2;font-weight:normal;">Button</div>
<svg style="left:221.2px;top:218.0px;" width="9.4" height="9.8" viewBox="0 0 9.4 9.8"><path d="M4.7 0.6 L8.7 2.8 L8.7 7 L4.7 9.2 L0.7 7 L0.7 2.8 Z" fill="#4d3412" stroke="#e0920f" stroke-width="1.1" stroke-linejoin="round"/><path d="M2.2 3.4 L4.7 2.2 L7.2 3.4" stroke="#e0920f" stroke-width="0.7" fill="none"/><rect x="2.4" y="4" width="1.6" height="3.6" fill="#9a9590"/><rect x="5.2" y="4.4" width="1.4" height="2.6" fill="#cfc9c0"/></svg>
<div class="t" style="left:232.6px;top:217.70px;height:12px;line-height:12px;font-size:7.1px;color:#e6e2e2;font-weight:normal;">First Responder</div>
<svg style="left:221px;top:228.7px;" width="10" height="10" viewBox="0 0 10 10"><rect x="0.5" y="0.5" width="9" height="9" rx="1" fill="#5a3e12" stroke="#d98c12" stroke-width="1"/><path d="M6 2.4 L2.4 2.4 L2.4 7.6 L6 7.6" stroke="#f0e6d6" stroke-width="0.8" fill="none"/><path d="M4.2 5 L8 5 M6.6 3.7 L8 5 L6.6 6.3" stroke="#f0e6d6" stroke-width="0.8" fill="none"/></svg>
<div class="t" style="left:232.6px;top:228.50px;height:12px;line-height:12px;font-size:7.1px;color:#e6e2e2;font-weight:normal;">Exit</div>
<div style="left:201.3px;top:539.4px;width:157.0px;height:13.100000000000023px;background:#343333;border-radius:3px;box-sizing:border-box;border:0.5px solid #3d3c3c;"></div>
<svg style="left:204.3px;top:541.8px;" width="7.5" height="7.5" viewBox="0 0 7.5 7.5"><circle cx="3.75" cy="3.75" r="3.3" stroke="#7c7878" stroke-width="0.75" fill="none"/><path d="M1.9 2.6 L5.6 2.6 L3.75 5.4 Z" fill="#7c7878"/></svg>
<div class="t" style="left:214px;top:540.60px;height:12px;line-height:12px;font-size:7.1px;color:#6f6b6b;font-weight:normal;">Filter</div>
<div style="left:404px;top:171.7px;width:117.29999999999995px;height:8.5px;background:#2b2b2b;box-sizing:border-box;border:0.5px solid #4a4a4a;"></div>
<svg style="left:449.8px;top:173.2px;" width="5.5" height="5.5" viewBox="0 0 5.5 5.5"><circle cx="2.75" cy="2.75" r="2.4" fill="#c99520"/><rect x="1.6" y="1.6" width="2.3" height="2.3" fill="#fff"/></svg>
<svg style="left:460.2px;top:173.3px;" width="5.2" height="5.2" viewBox="0 0 5.2 5.2"><path d="M2.6 0.2 L5 1.4 L5 3.8 L2.6 5 L0.2 3.8 L0.2 1.4 Z" fill="#c98a12"/></svg>
<svg style="left:470.8px;top:173.3px;" width="5.2" height="5.2" viewBox="0 0 5.2 5.2"><rect x="0.2" y="0.2" width="4.8" height="4.8" rx="0.6" fill="#8a5f14" stroke="#c98a12" stroke-width="0.5"/><rect x="1.5" y="1.5" width="2" height="2.2" fill="none" stroke="#e8d8b8" stroke-width="0.4"/></svg>
<div style="left:404.7px;top:183.4px;width:116.30000000000001px;height:252.6px;background:#ff4a3d;border-radius:11px;"></div>
<div style="left:430px;top:183.4px;width:65.69999999999999px;height:9.599999999999994px;background:#000;border-radius:0 0 4.5px 4.5px;"></div>
<div style="left:442.4px;top:433px;width:41.200000000000045px;height:1px;background:#6a3a36;"></div>
<svg style="left:376px;top:305.5px;" width="28" height="9.5" viewBox="0 0 28 9.5"><defs><linearGradient id="ag" gradientUnits="userSpaceOnUse" x1="0" y1="0" x2="27" y2="0"><stop offset="0" stop-color="#6a6464" stop-opacity="0"/><stop offset="0.6" stop-color="#6a6464"/></linearGradient></defs><rect x="0" y="4.3" width="27" height="0.9" fill="url(#ag)"/><path d="M22.5 0.4 L27 4.75 L22.5 9.1" stroke="#6a6464" stroke-width="0.9" fill="none"/></svg>
<div style="left:565.1px;top:172.2px;width:116.89999999999998px;height:7.600000000000023px;background:#2a2a2a;box-sizing:border-box;border:0.5px solid #4a4a4a;"></div>
<div class="t" style="left:523.3px;width:200px;text-align:center;top:170.20px;height:12px;line-height:12px;font-size:4px;color:#bdbdbd;font-weight:normal;-webkit-text-stroke:0;">View Controller</div>
<div style="left:565.2px;top:183.7px;width:116.79999999999995px;height:252.3px;background:#ffcc00;border-radius:11.5px;"></div>
<div style="left:591.1px;top:183.7px;width:65.0px;height:9.0px;background:#000;border-radius:0 0 4.5px 4.5px;"></div>
<div style="left:603.3px;top:433px;width:41.200000000000045px;height:1px;background:#6a5a30;"></div>
<div class="t" style="left:523.2px;width:200px;text-align:center;top:304.20px;height:12px;line-height:12px;font-size:4.2px;color:#5a78b8;font-weight:normal;-webkit-text-stroke:0;">Button</div>
<svg style="left:452px;top:295px;" width="28" height="30" viewBox="0 0 28 30"><rect x="8.3" y="9.5" width="10.7" height="16.5" stroke="#7a2a8a" stroke-width="0.8" fill="none"/>
<path d="M13.4 14.5 L13.4 20.5 M10.4 17.5 L16.4 17.5" stroke="#fff" stroke-width="0.9" opacity="0.9"/>
<rect x="6.200000000000001" y="7.4" width="4.2" height="4.2" rx="0.6" fill="#f0e8e8" stroke="#6a4a4a" stroke-width="0.6"/><rect x="6.200000000000001" y="15.700000000000001" width="4.2" height="4.2" rx="0.6" fill="#f0e8e8" stroke="#6a4a4a" stroke-width="0.6"/><rect x="6.200000000000001" y="23.9" width="4.2" height="4.2" rx="0.6" fill="#f0e8e8" stroke="#6a4a4a" stroke-width="0.6"/><rect x="11.200000000000001" y="7.4" width="4.2" height="4.2" rx="0.6" fill="#f0e8e8" stroke="#6a4a4a" stroke-width="0.6"/><rect x="11.200000000000001" y="23.9" width="4.2" height="4.2" rx="0.6" fill="#f0e8e8" stroke="#6a4a4a" stroke-width="0.6"/><rect x="16.9" y="7.4" width="4.2" height="4.2" rx="0.6" fill="#f0e8e8" stroke="#6a4a4a" stroke-width="0.6"/><rect x="16.9" y="15.700000000000001" width="4.2" height="4.2" rx="0.6" fill="#f0e8e8" stroke="#6a4a4a" stroke-width="0.6"/><rect x="16.9" y="23.9" width="4.2" height="4.2" rx="0.6" fill="#f0e8e8" stroke="#6a4a4a" stroke-width="0.6"/></svg>
<div style="left:444px;top:288.2px;width:47.10000000000002px;height:46.80000000000001px;background:transparent;box-sizing:border-box;border:4.5px solid #1e8ff5;border-radius:1.5px;"></div>
<div style="left:362px;top:534.5px;width:386px;height:3.0px;background:linear-gradient(rgba(58,53,53,0),#3a3535);"></div>
<svg style="left:367.4px;top:541.5px;" width="9.2" height="8" viewBox="0 0 9.2 8"><rect x="0.5" y="0.5" width="8.2" height="7" stroke="#8a8686" stroke-width="0.8" fill="none"/><path d="M3 0.5 L3 7.5" stroke="#8a8686" stroke-width="0.8"/></svg>
<div class="t" style="left:387.2px;top:540.30px;height:12px;line-height:12px;font-size:7.1px;color:#e0dcdc;font-weight:normal;">View as: iPhone 11 (<span style="font-size:4.5px">⌥</span>C <span style="font-size:4.5px">⌘</span>R)</div>
<div style="left:525px;top:545.2px;width:9px;height:0.7999999999999545px;background:#6a6666;"></div>
<div class="t" style="left:546.8px;top:540.30px;height:12px;line-height:12px;font-size:7.1px;color:#6d6969;font-weight:normal;">47%</div>
<svg style="left:577px;top:541.5px;" width="8" height="8" viewBox="0 0 8 8"><path d="M4 0.3 L4 7.7 M0.3 4 L7.7 4" stroke="#7d7979" stroke-width="0.9"/></svg>
<svg style="left:668px;top:541.5px;" width="9" height="8.5" viewBox="0 0 9 8.5"><path d="M0.5 2.5 L0.5 0.5 L2.5 0.5 M6.5 0.5 L8.5 0.5 L8.5 2.5 M8.5 6 L8.5 8 L6.5 8 M2.5 8 L0.5 8 L0.5 6" stroke="#8a8686" stroke-width="0.8" fill="none"/><circle cx="4.5" cy="4.25" r="2" stroke="#8a8686" stroke-width="0.8" fill="none"/></svg>
<svg style="left:683.5px;top:541.5px;" width="9" height="8.5" viewBox="0 0 9 8.5"><rect x="0.5" y="0.5" width="6" height="3" stroke="#8a8686" stroke-width="0.8" fill="none"/><rect x="0.5" y="4.8" width="8" height="3" stroke="#8a8686" stroke-width="0.8" fill="none"/></svg>
<svg style="left:699px;top:541.5px;" width="9" height="8.5" viewBox="0 0 9 8.5"><path d="M0.5 0.5 L0.5 8 M8.5 0.5 L8.5 8" stroke="#8a8686" stroke-width="0.8"/><rect x="2.5" y="2.5" width="4" height="3.5" stroke="#8a8686" stroke-width="0.8" fill="none"/></svg>
<svg style="left:714.5px;top:541.5px;" width="9" height="8.5" viewBox="0 0 9 8.5"><path d="M0.5 0.5 L0.5 8 M8.5 0.5 L8.5 8" stroke="#8a8686" stroke-width="0.8"/><path d="M4.5 1.5 L7 6.5 L2 6.5 Z" stroke="#8a8686" stroke-width="0.8" fill="none"/></svg>
<svg style="left:733.5px;top:541.3px;" width="9" height="8.5" viewBox="0 0 9 8.5"><rect x="0.5" y="0.5" width="8" height="7.5" stroke="#8a8686" stroke-width="0.8" fill="none"/><path d="M2.5 3.5 L4.5 5.5 L6.5 3.5" stroke="#8a8686" stroke-width="0.8" fill="none"/><path d="M0.5 2 L8.5 2" stroke="#8a8686" stroke-width="0.6"/></svg>
<svg style="left:770.1px;top:51.3px;" width="6.6" height="7.6" viewBox="0 0 6.6 7.6"><path d="M0.4 0.4 L4.2 0.4 L6.2 2.4 L6.2 7.2 L0.4 7.2 Z" stroke="#8e8a8a" stroke-width="0.8" fill="none"/><path d="M4.2 0.4 L4.2 2.4 L6.2 2.4" stroke="#8e8a8a" stroke-width="0.7" fill="none"/></svg>
<svg style="left:786.8px;top:51.2px;" width="8.2" height="8.2" viewBox="0 0 8.2 8.2"><circle cx="4.1" cy="4.1" r="3.6" stroke="#8e8a8a" stroke-width="0.8" fill="none"/><path d="M2.6 5.6 L5.3 2.9" stroke="#8e8a8a" stroke-width="0.8"/></svg>
<svg style="left:805px;top:51.2px;" width="8" height="8" viewBox="0 0 8 8"><rect x="0.5" y="0.5" width="7" height="7" rx="1" stroke="#8e8a8a" stroke-width="0.8" fill="none"/></svg>
<svg style="left:841.2px;top:51.3px;" width="9" height="8" viewBox="0 0 9 8"><path d="M2.3 0.6 L6.7 0.6 L6.7 2.6 L8.4 2.6 L4.5 7.4 L0.6 2.6 L2.3 2.6 Z" stroke="#1f84f5" stroke-width="1.2" fill="none" stroke-linejoin="round"/></svg>
<svg style="left:862.5px;top:51.3px;" width="6" height="8" viewBox="0 0 6 8"><rect x="1" y="0.5" width="3" height="7" stroke="#8e8a8a" stroke-width="0.8" fill="none"/></svg>
<svg style="left:878px;top:51.2px;" width="8.2" height="8.2" viewBox="0 0 8.2 8.2"><circle cx="4.1" cy="4.1" r="3.6" stroke="#8e8a8a" stroke-width="0.8" fill="none"/><path d="M2.2 4.1 L5.8 4.1 M4.3 2.6 L5.8 4.1 L4.3 5.6" stroke="#8e8a8a" stroke-width="0.8" fill="none"/></svg>
<div style="left:749px;top:63px;width:157px;height:0.6000000000000014px;background:#2e2a2a;"></div>
<div class="t" style="left:751.7px;top:64.10px;height:12px;line-height:12px;font-size:6.4px;color:#e0dcdc;font-weight:bold;">Button</div>
<div class="t" style="right:143.20000000000005px;top:77.40px;height:12px;line-height:12px;font-size:6.5px;color:#cbc7c7;font-weight:normal;">Type</div>
<div style="left:800.3px;top:78.6px;width:100.70000000000005px;height:9.100000000000009px;background:#6a6666;border-radius:2px;"></div>
<div style="left:892.7px;top:78.6px;width:8.299999999999955px;height:9.100000000000009px;background:#1f6fe3;border-radius:0 2px 2px 0;"></div>
<svg style="left:894.45px;top:79.85000000000001px;" width="4.8" height="6.6" viewBox="0 0 4.8 6.6"><path d="M0.5 2.4 L2.4 0.6 L4.3 2.4 M0.5 4.2 L2.4 6 L4.3 4.2" stroke="#fff" stroke-width="0.8" fill="none"/></svg>
<div class="t" style="left:804.3px;top:77.95px;height:12px;line-height:12px;font-size:6.9px;color:#e2dede;font-weight:normal;">System</div>
<div style="left:753px;top:91.10000000000001px;width:148px;height:0.5999999999999943px;background:#4a4646;"></div>
<div class="t" style="right:143.20000000000005px;top:94.10px;height:12px;line-height:12px;font-size:6.5px;color:#cbc7c7;font-weight:normal;">State Config</div>
<div style="left:800.3px;top:94.8px;width:100.70000000000005px;height:9.200000000000003px;background:#6a6666;border-radius:2px;"></div>
<div style="left:892.7px;top:94.8px;width:8.299999999999955px;height:9.200000000000003px;background:#1f6fe3;border-radius:0 2px 2px 0;"></div>
<svg style="left:894.45px;top:96.10000000000001px;" width="4.8" height="6.6" viewBox="0 0 4.8 6.6"><path d="M0.5 2.4 L2.4 0.6 L4.3 2.4 M0.5 4.2 L2.4 6 L4.3 4.2" stroke="#fff" stroke-width="0.8" fill="none"/></svg>
<div class="t" style="left:804.3px;top:94.20px;height:12px;line-height:12px;font-size:6.9px;color:#e2dede;font-weight:normal;">Default</div>
<div class="t" style="right:143.20000000000005px;top:106.40px;height:12px;line-height:12px;font-size:6.5px;color:#cbc7c7;font-weight:normal;">Title</div>
<div style="left:800.3px;top:107.6px;width:100.70000000000005px;height:9.0px;background:#6a6666;border-radius:2px;"></div>
<div style="left:892.7px;top:107.6px;width:8.299999999999955px;height:9.0px;background:#1f6fe3;border-radius:0 2px 2px 0;"></div>
<svg style="left:894.45px;top:108.8px;" width="4.8" height="6.6" viewBox="0 0 4.8 6.6"><path d="M0.5 2.4 L2.4 0.6 L4.3 2.4 M0.5 4.2 L2.4 6 L4.3 4.2" stroke="#fff" stroke-width="0.8" fill="none"/></svg>
<div class="t" style="left:804.3px;top:106.90px;height:12px;line-height:12px;font-size:6.9px;color:#e2dede;font-weight:normal;">Plain</div>
<div style="left:798.3px;top:118.6px;width:104.20000000000005px;height:14.400000000000006px;background:#3a3535;box-sizing:border-box;border:1.4px solid #2a6ca6;border-radius:1px;"></div>
<div style="left:802px;top:121.5px;width:6px;height:9.0px;background:#2d5d9a;"></div>
<div class="t" style="left:802.3px;top:120.80px;height:12px;line-height:12px;font-size:7.5px;color:#e8e8f0;font-weight:normal;">+</div>
<div class="t" style="left:754px;top:135.20px;height:12px;line-height:12px;font-size:7.5px;color:#9a9696;font-weight:normal;">+</div>
<div class="t" style="right:143.20000000000005px;top:134.80px;height:12px;line-height:12px;font-size:6.5px;color:#cbc7c7;font-weight:normal;">Font</div>
<div style="left:800.4px;top:135.7px;width:94.10000000000002px;height:9.600000000000023px;background:#3f3a3a;border-radius:2px;box-sizing:border-box;border:0.5px solid #4f4b4b;"></div>
<div class="t" style="left:803.6px;top:135.30px;height:12px;line-height:12px;font-size:7.05px;color:#e2dede;font-weight:normal;">System 40.0</div>
<svg style="left:882px;top:136.3px;" width="11" height="8.6" viewBox="0 0 11 8.6"><rect x="0.5" y="0.5" width="10" height="7.6" rx="1.5" stroke="#b9b5b5" stroke-width="0.8" fill="none"/><path d="M3.3 2.4 L7.7 2.4 M5.5 2.4 L5.5 6.6" stroke="#d9d5d5" stroke-width="0.9"/></svg>
<div style="left:895.5px;top:136.0px;width:5.0px;height:9.0px;background:#585454;border-radius:2px;"></div>
<svg style="left:896.0px;top:137.5px;" width="4" height="6" viewBox="0 0 4 6"><path d="M0.8 2.2 L2 1 L3.2 2.2 M0.8 3.8 L2 5 L3.2 3.8" stroke="#bdb9b9" stroke-width="0.6" fill="none"/></svg>
<div class="t" style="right:143.20000000000005px;top:148.20px;height:12px;line-height:12px;font-size:6.5px;color:#cbc7c7;font-weight:normal;">Text Color</div>
<div style="left:800.3px;top:149.4px;width:100.70000000000005px;height:9.099999999999994px;background:#6a6666;border-radius:2px;"></div>
<div style="left:892.7px;top:149.4px;width:8.299999999999955px;height:9.099999999999994px;background:#1f6fe3;border-radius:0 2px 2px 0;"></div>
<svg style="left:894.45px;top:150.64999999999998px;" width="4.8" height="6.6" viewBox="0 0 4.8 6.6"><path d="M0.5 2.4 L2.4 0.6 L4.3 2.4 M0.5 4.2 L2.4 6 L4.3 4.2" stroke="#fff" stroke-width="0.8" fill="none"/></svg>
<div style="left:804.3px;top:151.6px;width:16.700000000000045px;height:4.700000000000017px;background:#fff;"></div>
<div class="t" style="left:823.8px;top:148.70px;height:12px;line-height:12px;font-size:7.05px;color:#e2dede;font-weight:normal;">White Color</div>
<div class="t" style="right:143.20000000000005px;top:162.60px;height:12px;line-height:12px;font-size:6.5px;color:#cbc7c7;font-weight:normal;">Shadow Color</div>
<div style="left:800.3px;top:163.7px;width:100.70000000000005px;height:9.0px;background:#6a6666;border-radius:2px;"></div>
<div style="left:892.7px;top:163.7px;width:8.299999999999955px;height:9.0px;background:#1f6fe3;border-radius:0 2px 2px 0;"></div>
<svg style="left:894.45px;top:164.89999999999998px;" width="4.8" height="6.6" viewBox="0 0 4.8 6.6"><path d="M0.5 2.4 L2.4 0.6 L4.3 2.4 M0.5 4.2 L2.4 6 L4.3 4.2" stroke="#fff" stroke-width="0.8" fill="none"/></svg>
<div style="left:804.3px;top:166px;width:16.700000000000045px;height:4.599999999999994px;background:#6a1d1d;"></div>
<div class="t" style="left:823.8px;top:163.00px;height:12px;line-height:12px;font-size:7.05px;color:#e2dede;font-weight:normal;">Default</div>
<div class="t" style="right:143.20000000000005px;top:176.80px;height:12px;line-height:12px;font-size:6.5px;color:#cbc7c7;font-weight:normal;">Image</div>
<div style="left:800.3px;top:177.8px;width:92.30000000000007px;height:9.199999999999989px;background:#3f3a3a;border-radius:2px 0 0 2px;box-sizing:border-box;border:0.5px solid #4f4b4b;"></div>
<div style="left:892.6px;top:177.8px;width:8.399999999999977px;height:9.199999999999989px;background:#1f6fe3;border-radius:0 2px 2px 0;"></div>
<svg style="left:894.6px;top:180.9px;" width="4.5" height="3" viewBox="0 0 4.5 3"><path d="M0.5 0.6 L2.25 2.3 L4 0.6" stroke="#fff" stroke-width="0.7" fill="none"/></svg>
<div class="t" style="right:143.20000000000005px;top:189.80px;height:12px;line-height:12px;font-size:6.5px;color:#cbc7c7;font-weight:normal;">Background</div>
<div style="left:800.3px;top:191px;width:92.30000000000007px;height:9px;background:#3f3a3a;border-radius:2px 0 0 2px;box-sizing:border-box;border:0.5px solid #4f4b4b;"></div>
<div style="left:892.6px;top:191px;width:8.399999999999977px;height:9px;background:#1f6fe3;border-radius:0 2px 2px 0;"></div>
<svg style="left:894.6px;top:194.0px;" width="4.5" height="3" viewBox="0 0 4.5 3"><path d="M0.5 0.6 L2.25 2.3 L4 0.6" stroke="#fff" stroke-width="0.7" fill="none"/></svg>
<div class="t" style="left:757.4px;top:203.70px;height:12px;line-height:12px;font-size:6.7px;color:#cbc7c7;font-weight:normal;">Default Symbol Configuration</div>
<div class="t" style="right:143.20000000000005px;top:214.10px;height:12px;line-height:12px;font-size:6.5px;color:#cbc7c7;font-weight:normal;">Configuration</div>
<div style="left:800.3px;top:214.8px;width:100.70000000000005px;height:9.899999999999977px;background:#6a6666;border-radius:2px;"></div>
<div style="left:892.7px;top:214.8px;width:8.299999999999955px;height:9.899999999999977px;background:#1f6fe3;border-radius:0 2px 2px 0;"></div>
<svg style="left:894.45px;top:216.45px;" width="4.8" height="6.6" viewBox="0 0 4.8 6.6"><path d="M0.5 2.4 L2.4 0.6 L4.3 2.4 M0.5 4.2 L2.4 6 L4.3 4.2" stroke="#fff" stroke-width="0.8" fill="none"/></svg>
<div class="t" style="left:804.3px;top:214.55px;height:12px;line-height:12px;font-size:6.9px;color:#e2dede;font-weight:normal;">Unspecified</div>
<div class="t" style="right:143.20000000000005px;top:228.60px;height:12px;line-height:12px;font-size:6.5px;color:#cbc7c7;font-weight:normal;">Scale</div>
<div style="left:800.3px;top:229.4px;width:100.70000000000005px;height:9.599999999999994px;background:#6a6666;border-radius:2px;"></div>
<div style="left:892.7px;top:229.4px;width:8.299999999999955px;height:9.599999999999994px;background:#1f6fe3;border-radius:0 2px 2px 0;"></div>
<svg style="left:894.45px;top:230.89999999999998px;" width="4.8" height="6.6" viewBox="0 0 4.8 6.6"><path d="M0.5 2.4 L2.4 0.6 L4.3 2.4 M0.5 4.2 L2.4 6 L4.3 4.2" stroke="#fff" stroke-width="0.8" fill="none"/></svg>
<div class="t" style="left:804.3px;top:229.00px;height:12px;line-height:12px;font-size:6.9px;color:#e2dede;font-weight:normal;">Unspecified</div>
<div class="t" style="right:143.20000000000005px;top:242.00px;height:12px;line-height:12px;font-size:6.5px;color:#cbc7c7;font-weight:normal;">Weight</div>
<div style="left:800.3px;top:243px;width:100.70000000000005px;height:9.300000000000011px;background:#6a6666;border-radius:2px;"></div>
<div style="left:892.7px;top:243px;width:8.299999999999955px;height:9.300000000000011px;background:#1f6fe3;border-radius:0 2px 2px 0;"></div>
<svg style="left:894.45px;top:244.35px;" width="4.8" height="6.6" viewBox="0 0 4.8 6.6"><path d="M0.5 2.4 L2.4 0.6 L4.3 2.4 M0.5 4.2 L2.4 6 L4.3 4.2" stroke="#fff" stroke-width="0.8" fill="none"/></svg>
<div class="t" style="left:804.3px;top:242.45px;height:12px;line-height:12px;font-size:6.9px;color:#e2dede;font-weight:normal;">Unspecified</div>
<div style="left:753px;top:256.0px;width:148px;height:0.6000000000000227px;background:#4a4646;"></div>
<div style="left:799.4px;top:260.0px;width:7.2000000000000455px;height:7.2000000000000455px;background:#595555;border-radius:1.6px;"></div>
<div class="t" style="left:810px;top:258.40px;height:12px;line-height:12px;font-size:7.05px;color:#e2dede;font-weight:normal;">Adjusts Image Size</div>
<div class="t" style="right:143.20000000000005px;top:258.00px;height:12px;line-height:12px;font-size:6.5px;color:#cbc7c7;font-weight:normal;">Accessibility</div>
<div class="t" style="right:143.20000000000005px;top:271.00px;height:12px;line-height:12px;font-size:6.5px;color:#cbc7c7;font-weight:normal;">Shadow Offset</div>
<div style="left:800px;top:272px;width:41.60000000000002px;height:9.199999999999989px;background:#3f3a3a;border-radius:2px;box-sizing:border-box;border:0.5px solid #4f4b4b;"></div>
<div class="t" style="right:100.39999999999998px;top:271.40px;height:12px;line-height:12px;font-size:7.05px;color:#e2dede;font-weight:normal;">0</div>
<div style="left:842px;top:272.3px;width:5px;height:8.599999999999966px;background:#585454;border-radius:2px;"></div>
<svg style="left:842.5px;top:273.6px;" width="4" height="6" viewBox="0 0 4 6"><path d="M0.8 2.2 L2 1 L3.2 2.2 M0.8 3.8 L2 5 L3.2 3.8" stroke="#bdb9b9" stroke-width="0.6" fill="none"/></svg>
<div style="left:853px;top:272px;width:41.799999999999955px;height:9.199999999999989px;background:#3f3a3a;border-radius:2px;box-sizing:border-box;border:0.5px solid #4f4b4b;"></div>
<div class="t" style="right:47.200000000000045px;top:271.40px;height:12px;line-height:12px;font-size:7.05px;color:#e2dede;font-weight:normal;">0</div>
<div style="left:896px;top:272.3px;width:5px;height:8.599999999999966px;background:#585454;border-radius:2px;"></div>
<svg style="left:896.5px;top:273.6px;" width="4" height="6" viewBox="0 0 4 6"><path d="M0.8 2.2 L2 1 L3.2 2.2 M0.8 3.8 L2 5 L3.2 3.8" stroke="#bdb9b9" stroke-width="0.6" fill="none"/></svg>
<div class="t" style="left:720.5px;width:200px;text-align:center;top:280.40px;height:12px;line-height:12px;font-size:6.5px;color:#cbc7c7;font-weight:normal;">Width</div>
<div class="t" style="left:772.4px;width:200px;text-align:center;top:280.40px;height:12px;line-height:12px;font-size:6.5px;color:#cbc7c7;font-weight:normal;">Height</div>
<div style="left:799.4px;top:293.0px;width:7.2000000000000455px;height:7.2000000000000455px;background:#595555;border-radius:1.6px;"></div>
<div class="t" style="left:810px;top:291.40px;height:12px;line-height:12px;font-size:7.05px;color:#e2dede;font-weight:normal;">Reverses On Highlight</div>
<div style="left:799.4px;top:304.0px;width:7.2000000000000455px;height:7.2000000000000455px;background:#595555;border-radius:1.6px;"></div>
<div class="t" style="left:810px;top:302.40px;height:12px;line-height:12px;font-size:7.05px;color:#e2dede;font-weight:normal;">Shows Touch On Highlight</div>
<div class="t" style="right:143.20000000000005px;top:302.00px;height:12px;line-height:12px;font-size:6.5px;color:#cbc7c7;font-weight:normal;">Drawing</div>
<div style="left:799.4px;top:314.9px;width:7.2000000000000455px;height:7.2000000000000455px;background:#1f6fe3;border-radius:1.6px;"></div>
<svg style="left:800.6999999999999px;top:316.1px;" width="5" height="4.6" viewBox="0 0 5 4.6"><path d="M0.5 2.4 L1.9 3.9 L4.5 0.6" stroke="#fff" stroke-width="0.9" fill="none"/></svg>
<div class="t" style="left:810px;top:313.30px;height:12px;line-height:12px;font-size:7.05px;color:#e2dede;font-weight:normal;">Highlighted Adjusts Image</div>
<div style="left:799.4px;top:325.7px;width:7.2000000000000455px;height:7.2000000000000455px;background:#1f6fe3;border-radius:1.6px;"></div>
<svg style="left:800.6999999999999px;top:326.90000000000003px;" width="5" height="4.6" viewBox="0 0 5 4.6"><path d="M0.5 2.4 L1.9 3.9 L4.5 0.6" stroke="#fff" stroke-width="0.9" fill="none"/></svg>
<div class="t" style="left:810px;top:324.10px;height:12px;line-height:12px;font-size:7.05px;color:#e2dede;font-weight:normal;">Disabled Adjusts Image</div>
<div class="t" style="right:143.20000000000005px;top:336.10px;height:12px;line-height:12px;font-size:6.5px;color:#cbc7c7;font-weight:normal;">Line Break</div>
<div style="left:800.3px;top:337px;width:100.70000000000005px;height:9.199999999999989px;background:#6a6666;border-radius:2px;"></div>
<div style="left:892.7px;top:337px;width:8.299999999999955px;height:9.199999999999989px;background:#1f6fe3;border-radius:0 2px 2px 0;"></div>
<svg style="left:894.45px;top:338.3px;" width="4.8" height="6.6" viewBox="0 0 4.8 6.6"><path d="M0.5 2.4 L2.4 0.6 L4.3 2.4 M0.5 4.2 L2.4 6 L4.3 4.2" stroke="#fff" stroke-width="0.8" fill="none"/></svg>
<div class="t" style="left:804.3px;top:336.40px;height:12px;line-height:12px;font-size:6.9px;color:#e2dede;font-weight:normal;">Truncate Middle</div>
<div style="left:799.4px;top:350.2px;width:7.2000000000000455px;height:7.2000000000000455px;background:#595555;border-radius:1.6px;"></div>
<div class="t" style="left:810px;top:348.60px;height:12px;line-height:12px;font-size:7.05px;color:#e2dede;font-weight:normal;">Spring Loaded</div>
<div class="t" style="right:143.20000000000005px;top:348.20px;height:12px;line-height:12px;font-size:6.5px;color:#cbc7c7;font-weight:normal;">Drag and Drop</div>
<div style="left:749px;top:366.5px;width:157px;height:0.6000000000000227px;background:#2a2626;"></div>
<div class="t" style="left:752px;top:368.20px;height:12px;line-height:12px;font-size:6.4px;color:#e0dcdc;font-weight:bold;">Control</div>
<div class="t" style="right:143.20000000000005px;top:380.80px;height:12px;line-height:12px;font-size:6.5px;color:#cbc7c7;font-weight:normal;">Alignment</div>
<div style="left:800px;top:382px;width:98px;height:8.699999999999989px;background:#5e5a5a;border-radius:2px;"></div>
<div style="left:816.3333333333334px;top:383px;width:0.5px;height:6.699999999999989px;background:#4a4646;"></div>
<div style="left:832.6666666666666px;top:382px;width:16.33333333333337px;height:8.699999999999989px;background:#1f6fe3;"></div>
<div style="left:865.3333333333334px;top:383px;width:0.5px;height:6.699999999999989px;background:#4a4646;"></div>
<div style="left:881.6666666666666px;top:383px;width:0.5px;height:6.699999999999989px;background:#4a4646;"></div>
<svg style="left:804.9166666666666px;top:382.8px;" width="6.5" height="7" viewBox="0 0 6.5 7"><rect x="0.5" y="0.5" width="5.5" height="6" stroke="#d0cccc" stroke-width="0.6" fill="none"/><path d="M2 2 L2 5 L4 5" stroke="#d0cccc" stroke-width="0.6" fill="none"/></svg>
<svg style="left:821.25px;top:382.8px;" width="6.5" height="7" viewBox="0 0 6.5 7"><path d="M0.5 0.5 L0.5 6.5 M0.5 0.5 L6 0.5 L6 6.5 L0.5 6.5" stroke="#d0cccc" stroke-width="0.6" fill="none"/></svg>
<svg style="left:837.5833333333334px;top:382.8px;" width="6.5" height="7" viewBox="0 0 6.5 7"><rect x="0.5" y="0.5" width="5.5" height="6" stroke="#fff" stroke-width="0.6" fill="none"/><path d="M3.25 0 L3.25 7" stroke="#fff" stroke-width="0.7"/></svg>
<svg style="left:853.9166666666666px;top:382.8px;" width="6.5" height="7" viewBox="0 0 6.5 7"><rect x="0.5" y="0.5" width="5.5" height="6" stroke="#d0cccc" stroke-width="0.6" fill="none"/><path d="M2 2 L4.5 2 M3.25 2 L3.25 5" stroke="#d0cccc" stroke-width="0.6" fill="none"/></svg>
<svg style="left:870.25px;top:382.8px;" width="6.5" height="7" viewBox="0 0 6.5 7"><rect x="0.5" y="0.5" width="5.5" height="6" stroke="#d0cccc" stroke-width="0.6" fill="none"/><path d="M6 0 L6 7" stroke="#d0cccc" stroke-width="0.9"/></svg>
<svg style="left:886.5833333333334px;top:382.8px;" width="6.5" height="7" viewBox="0 0 6.5 7"><rect x="0.5" y="0.5" width="5.5" height="6" stroke="#d0cccc" stroke-width="0.6" fill="none"/><path d="M0.5 3.5 L6 3.5" stroke="#d0cccc" stroke-width="0.6"/><path d="M2 2 L4.5 2 M2 5 L4.5 5" stroke="#d0cccc" stroke-width="0.5"/></svg>
<div class="t" style="left:750.3px;width:200px;text-align:center;top:391.90px;height:12px;line-height:12px;font-size:6.5px;color:#cbc7c7;font-weight:normal;">Horizontal</div>
<div style="left:800px;top:402.7px;width:100.60000000000002px;height:9.300000000000011px;background:#5e5a5a;border-radius:2px;"></div>
<div style="left:825.15px;top:402.7px;width:25.149999999999977px;height:9.300000000000011px;background:#1f6fe3;"></div>
<div style="left:875.45px;top:403.7px;width:0.5px;height:7.300000000000011px;background:#4a4646;"></div>
<svg style="left:809.075px;top:403.6px;" width="7" height="7.5" viewBox="0 0 7 7.5"><path d="M0.5 0.5 L6.5 0.5 M1.5 0.5 L1.5 7 L5.5 7 L5.5 0.5" stroke="#d0cccc" stroke-width="0.6" fill="none"/></svg>
<svg style="left:834.225px;top:403.6px;" width="7" height="7.5" viewBox="0 0 7 7.5"><rect x="1" y="0.5" width="5" height="6.5" stroke="#fff" stroke-width="0.6" fill="none"/><path d="M0 3.75 L7 3.75" stroke="#fff" stroke-width="0.7"/></svg>
<svg style="left:859.375px;top:403.6px;" width="7" height="7.5" viewBox="0 0 7 7.5"><path d="M1.5 0.5 L1.5 7 L5.5 7 L5.5 0.5 L1.5 0.5 M0.5 7 L6.5 7" stroke="#d0cccc" stroke-width="0.6" fill="none"/></svg>
<svg style="left:884.525px;top:403.6px;" width="7" height="7.5" viewBox="0 0 7 7.5"><rect x="1" y="0.5" width="5" height="6.5" stroke="#d0cccc" stroke-width="0.6" fill="none"/><path d="M3.5 0.5 L3.5 7" stroke="#d0cccc" stroke-width="0.6"/></svg>
<div class="t" style="left:750px;width:200px;text-align:center;top:413.00px;height:12px;line-height:12px;font-size:6.5px;color:#cbc7c7;font-weight:normal;">Vertical</div>
<div style="left:753px;top:424.2px;width:148px;height:0.6000000000000227px;background:#4a4646;"></div>
<div style="left:799.4px;top:427.4px;width:7.2000000000000455px;height:7.2000000000000455px;background:#595555;border-radius:1.6px;"></div>
<div class="t" style="left:810px;top:425.80px;height:12px;line-height:12px;font-size:7.05px;color:#e2dede;font-weight:normal;">Selected</div>
<div class="t" style="right:143.20000000000005px;top:425.40px;height:12px;line-height:12px;font-size:6.5px;color:#cbc7c7;font-weight:normal;">State</div>
<div style="left:799.4px;top:438.5px;width:7.2000000000000455px;height:7.2000000000000455px;background:#1f6fe3;border-radius:1.6px;"></div>
<svg style="left:800.6999999999999px;top:439.70000000000005px;" width="5" height="4.6" viewBox="0 0 5 4.6"><path d="M0.5 2.4 L1.9 3.9 L4.5 0.6" stroke="#fff" stroke-width="0.9" fill="none"/></svg>
<div class="t" style="left:810px;top:436.90px;height:12px;line-height:12px;font-size:7.05px;color:#e2dede;font-weight:normal;">Enabled</div>
<div style="left:799.4px;top:449.5px;width:7.2000000000000455px;height:7.2000000000000455px;background:#595555;border-radius:1.6px;"></div>
<div class="t" style="left:810px;top:447.90px;height:12px;line-height:12px;font-size:7.05px;color:#e2dede;font-weight:normal;">Highlighted</div>
<div style="left:749px;top:465.7px;width:157px;height:0.6000000000000227px;background:#2a2626;"></div>
<div class="t" style="left:751.7px;top:467.50px;height:12px;line-height:12px;font-size:6.4px;color:#e0dcdc;font-weight:bold;">View</div>
<div class="t" style="right:143.20000000000005px;top:480.80px;height:12px;line-height:12px;font-size:6.5px;color:#cbc7c7;font-weight:normal;">Content Mode</div>
<div style="left:800.3px;top:481.8px;width:100.70000000000005px;height:9.099999999999966px;background:#6a6666;border-radius:2px;"></div>
<div style="left:892.7px;top:481.8px;width:8.299999999999955px;height:9.099999999999966px;background:#1f6fe3;border-radius:0 2px 2px 0;"></div>
<svg style="left:894.45px;top:483.05px;" width="4.8" height="6.6" viewBox="0 0 4.8 6.6"><path d="M0.5 2.4 L2.4 0.6 L4.3 2.4 M0.5 4.2 L2.4 6 L4.3 4.2" stroke="#fff" stroke-width="0.8" fill="none"/></svg>
<div class="t" style="left:804.3px;top:481.15px;height:12px;line-height:12px;font-size:6.9px;color:#e2dede;font-weight:normal;">Scale To Fill</div>
<div class="t" style="right:143.20000000000005px;top:494.10px;height:12px;line-height:12px;font-size:6.5px;color:#cbc7c7;font-weight:normal;">Semantic</div>
<div style="left:800.3px;top:495.2px;width:100.70000000000005px;height:9.100000000000023px;background:#6a6666;border-radius:2px;"></div>
<div style="left:892.7px;top:495.2px;width:8.299999999999955px;height:9.100000000000023px;background:#1f6fe3;border-radius:0 2px 2px 0;"></div>
<svg style="left:894.45px;top:496.45px;" width="4.8" height="6.6" viewBox="0 0 4.8 6.6"><path d="M0.5 2.4 L2.4 0.6 L4.3 2.4 M0.5 4.2 L2.4 6 L4.3 4.2" stroke="#fff" stroke-width="0.8" fill="none"/></svg>
<div class="t" style="left:804.3px;top:494.55px;height:12px;line-height:12px;font-size:6.9px;color:#e2dede;font-weight:normal;">Unspecified</div>
<div class="t" style="right:143.20000000000005px;top:507.90px;height:12px;line-height:12px;font-size:6.5px;color:#cbc7c7;font-weight:normal;">Tag</div>
<div style="left:800px;top:508.5px;width:93.79999999999995px;height:10.5px;background:#3f3a3a;border-radius:2px;box-sizing:border-box;border:0.5px solid #4f4b4b;"></div>
<div class="t" style="right:48.200000000000045px;top:508.55px;height:12px;line-height:12px;font-size:7.05px;color:#e2dede;font-weight:normal;">0</div>
<div style="left:895.3px;top:508.8px;width:5.0px;height:9.900000000000034px;background:#585454;border-radius:2px;"></div>
<svg style="left:895.8px;top:510.75px;" width="4" height="6" viewBox="0 0 4 6"><path d="M0.8 2.2 L2 1 L3.2 2.2 M0.8 3.8 L2 5 L3.2 3.8" stroke="#bdb9b9" stroke-width="0.6" fill="none"/></svg>
<div style="left:753px;top:522.2px;width:148px;height:0.599999999999909px;background:#4a4646;"></div>
<div style="left:799.4px;top:525.8px;width:7.2000000000000455px;height:7.2000000000000455px;background:#1f6fe3;border-radius:1.6px;"></div>
<svg style="left:800.6999999999999px;top:527.0px;" width="5" height="4.6" viewBox="0 0 5 4.6"><path d="M0.5 2.4 L1.9 3.9 L4.5 0.6" stroke="#fff" stroke-width="0.9" fill="none"/></svg>
<div class="t" style="left:810px;top:524.20px;height:12px;line-height:12px;font-size:7.05px;color:#e2dede;font-weight:normal;">User Interaction Enabled</div>
<div class="t" style="right:143.20000000000005px;top:523.80px;height:12px;line-height:12px;font-size:6.5px;color:#cbc7c7;font-weight:normal;">Interaction</div>
<div style="left:799.4px;top:536.6px;width:7.2000000000000455px;height:7.2000000000000455px;background:#595555;border-radius:1.6px;"></div>
<div class="t" style="left:810px;top:535.00px;height:12px;line-height:12px;font-size:7.05px;color:#e2dede;font-weight:normal;">Multiple Touch</div>
<div style="left:753px;top:546.7px;width:148px;height:0.599999999999909px;background:#4a4646;"></div>
<div style="left:800px;top:550.5px;width:93.79999999999995px;height:3.5px;background:#3f3a3a;border-radius:2px 2px 0 0;"></div>
<div style="left:895.3px;top:550.5px;width:5.0px;height:3.5px;background:#585454;"></div>
<svg style="left:416.3px;top:269.4px;" width="32" height="32" viewBox="0 0 32 32"><circle cx="16" cy="16" r="13.45" stroke="#fff" stroke-width="2.3" fill="none"/>
<circle cx="16" cy="16" r="11.0" stroke="#1e8ff5" stroke-width="2.6" fill="none"/>
<circle cx="16" cy="16" r="9.0" stroke="#fff" stroke-width="1.4" fill="none"/>
<path d="M14.3 7.6 L18.9 7.6 L18.9 24.9 L14.5 24.9 L14.5 13.2 L11 13.9 L11 10.4 Q13.2 9.6 14.3 7.6 Z" fill="#1e8ff5" stroke="#fff" stroke-width="2.6" paint-order="stroke" stroke-linejoin="round"/><path d="M14.3 7.6 L18.9 7.6 L18.9 24.9 L14.5 24.9 L14.5 13.2 L11 13.9 L11 10.4 Q13.2 9.6 14.3 7.6 Z" fill="#1e8ff5"/></svg>
<svg style="left:799.5px;top:38.2px;" width="32" height="32" viewBox="0 0 32 32"><circle cx="16" cy="16" r="13.45" stroke="#fff" stroke-width="2.3" fill="none"/>
<circle cx="16" cy="16" r="11.0" stroke="#fa2d6c" stroke-width="2.6" fill="none"/>
<circle cx="16" cy="16" r="9.0" stroke="#fff" stroke-width="1.4" fill="none"/>
<text x="0" y="0" text-anchor="middle" font-family="Liberation Sans" font-weight="bold" font-size="22" transform="translate(16.2,22.9) scale(1.42,1)" fill="#fff" stroke="#fff" stroke-width="3.8" stroke-linejoin="round">2</text><text x="0" y="0" text-anchor="middle" font-family="Liberation Sans" font-weight="bold" font-size="22" transform="translate(16.2,22.9) scale(1.42,1)" fill="#fa2d6c" stroke="#fa2d6c" stroke-width="1.5" stroke-linejoin="round">2</text></svg>
<svg style="left:715px;top:108.5px;" width="32" height="32" viewBox="0 0 32 32"><circle cx="16" cy="16" r="13.45" stroke="#fff" stroke-width="2.3" fill="none"/>
<circle cx="16" cy="16" r="11.0" stroke="#fa2d6c" stroke-width="2.6" fill="none"/>
<circle cx="16" cy="16" r="9.0" stroke="#fff" stroke-width="1.4" fill="none"/>
<text x="0" y="0" text-anchor="middle" font-family="Liberation Sans" font-weight="bold" font-size="23" transform="translate(16.2,22.8) scale(1.3,1)" fill="#fff" stroke="#fff" stroke-width="3.8" stroke-linejoin="round">3</text><text x="0" y="0" text-anchor="middle" font-family="Liberation Sans" font-weight="bold" font-size="23" transform="translate(16.2,22.8) scale(1.3,1)" fill="#fa2d6c" stroke="#fa2d6c" stroke-width="1.5" stroke-linejoin="round">3</text></svg>
<div style="left:829.7px;top:40.4px;width:34.09999999999991px;height:31.300000000000004px;background:transparent;box-sizing:border-box;border:4.6px solid #f92e6c;border-radius:2px;"></div>
<div style="left:744.4px;top:113.8px;width:163.5px;height:53.89999999999999px;background:transparent;box-sizing:border-box;border:4.3px solid #f92e6c;border-radius:2px;"></div>
<svg style="left:661.3px;top:176.2px;" width="240" height="28" viewBox="0 0 240 28"><text x="3" y="20" font-family="Liberation Sans" font-weight="bold" font-size="18.7" letter-spacing="0" stroke-linejoin="round" fill="#fff" stroke="#fff" stroke-width="3.9" style="filter:drop-shadow(0 0 0.7px rgba(0,0,0,0.45))">Name</text><text x="3" y="20" font-family="Liberation Sans" font-weight="bold" font-size="18.7" letter-spacing="0" stroke-linejoin="round" fill="#fa2d6c" stroke="#fa2d6c" stroke-width="1.25">Name</text></svg>
<svg style="left:718.3px;top:176.2px;" width="240" height="28" viewBox="0 0 240 28"><text x="3" y="20" font-family="Liberation Sans" font-weight="bold" font-size="18.7" letter-spacing="0" stroke-linejoin="round" fill="#fff" stroke="#fff" stroke-width="3.9" style="filter:drop-shadow(0 0 0.7px rgba(0,0,0,0.45))">:</text><text x="3" y="20" font-family="Liberation Sans" font-weight="bold" font-size="18.7" letter-spacing="0" stroke-linejoin="round" fill="#fa2d6c" stroke="#fa2d6c" stroke-width="1.25">:</text></svg>
<svg style="left:730.3px;top:177.2px;" width="240" height="28" viewBox="0 0 240 28"><text x="3" y="20" font-family="Liberation Sans" font-weight="bold" font-size="24" letter-spacing="0" stroke-linejoin="round" fill="#fff" stroke="#fff" stroke-width="3.9" style="filter:drop-shadow(0 0 0.7px rgba(0,0,0,0.45))">+</text><text x="3" y="20" font-family="Liberation Sans" font-weight="bold" font-size="24" letter-spacing="0" stroke-linejoin="round" fill="#fa2d6c" stroke="#fa2d6c" stroke-width="1.25">+</text></svg>
<svg style="left:661.3px;top:202.5px;" width="240" height="28" viewBox="0 0 240 28"><text x="3" y="20" font-family="Liberation Sans" font-weight="bold" font-size="18.1" letter-spacing="0" stroke-linejoin="round" fill="#fff" stroke="#fff" stroke-width="3.9" style="filter:drop-shadow(0 0 0.7px rgba(0,0,0,0.45))">Font</text><text x="3" y="20" font-family="Liberation Sans" font-weight="bold" font-size="18.1" letter-spacing="0" stroke-linejoin="round" fill="#fa2d6c" stroke="#fa2d6c" stroke-width="1.25">Font</text></svg>
<svg style="left:706.5px;top:202.5px;" width="240" height="28" viewBox="0 0 240 28"><text x="3" y="20" font-family="Liberation Sans" font-weight="bold" font-size="18.7" letter-spacing="0" stroke-linejoin="round" fill="#fff" stroke="#fff" stroke-width="3.9" style="filter:drop-shadow(0 0 0.7px rgba(0,0,0,0.45))">:</text><text x="3" y="20" font-family="Liberation Sans" font-weight="bold" font-size="18.7" letter-spacing="0" stroke-linejoin="round" fill="#fa2d6c" stroke="#fa2d6c" stroke-width="1.25">:</text></svg>
<svg style="left:717.6px;top:202.5px;" width="240" height="28" viewBox="0 0 240 28"><text x="3" y="20" font-family="Liberation Sans" font-weight="bold" font-size="18.7" letter-spacing="0.65" stroke-linejoin="round" fill="#fff" stroke="#fff" stroke-width="3.9" style="filter:drop-shadow(0 0 0.7px rgba(0,0,0,0.45))">system 40.0</text><text x="3" y="20" font-family="Liberation Sans" font-weight="bold" font-size="18.7" letter-spacing="0.65" stroke-linejoin="round" fill="#fa2d6c" stroke="#fa2d6c" stroke-width="1.25">system 40.0</text></svg>
<svg style="left:661.3px;top:228.9px;" width="240" height="28" viewBox="0 0 240 28"><text x="3" y="20" font-family="Liberation Sans" font-weight="bold" font-size="18.85" letter-spacing="0" stroke-linejoin="round" fill="#fff" stroke="#fff" stroke-width="3.9" style="filter:drop-shadow(0 0 0.7px rgba(0,0,0,0.45))">TextColor</text><text x="3" y="20" font-family="Liberation Sans" font-weight="bold" font-size="18.85" letter-spacing="0" stroke-linejoin="round" fill="#fa2d6c" stroke="#fa2d6c" stroke-width="1.25">TextColor</text></svg>
<svg style="left:754.5px;top:228.9px;" width="240" height="28" viewBox="0 0 240 28"><text x="3" y="20" font-family="Liberation Sans" font-weight="bold" font-size="18.7" letter-spacing="0" stroke-linejoin="round" fill="#fff" stroke="#fff" stroke-width="3.9" style="filter:drop-shadow(0 0 0.7px rgba(0,0,0,0.45))">:</text><text x="3" y="20" font-family="Liberation Sans" font-weight="bold" font-size="18.7" letter-spacing="0" stroke-linejoin="round" fill="#fa2d6c" stroke="#fa2d6c" stroke-width="1.25">:</text></svg>
<svg style="left:766.5px;top:228.9px;" width="240" height="28" viewBox="0 0 240 28"><text x="3" y="20" font-family="Liberation Sans" font-weight="bold" font-size="18.5" letter-spacing="0" stroke-linejoin="round" fill="#fff" stroke="#fff" stroke-width="3.9" style="filter:drop-shadow(0 0 0.7px rgba(0,0,0,0.45))">White Color</text><text x="3" y="20" font-family="Liberation Sans" font-weight="bold" font-size="18.5" letter-spacing="0" stroke-linejoin="round" fill="#fa2d6c" stroke="#fa2d6c" stroke-width="1.25">White Color</text></svg>
</body></html>
